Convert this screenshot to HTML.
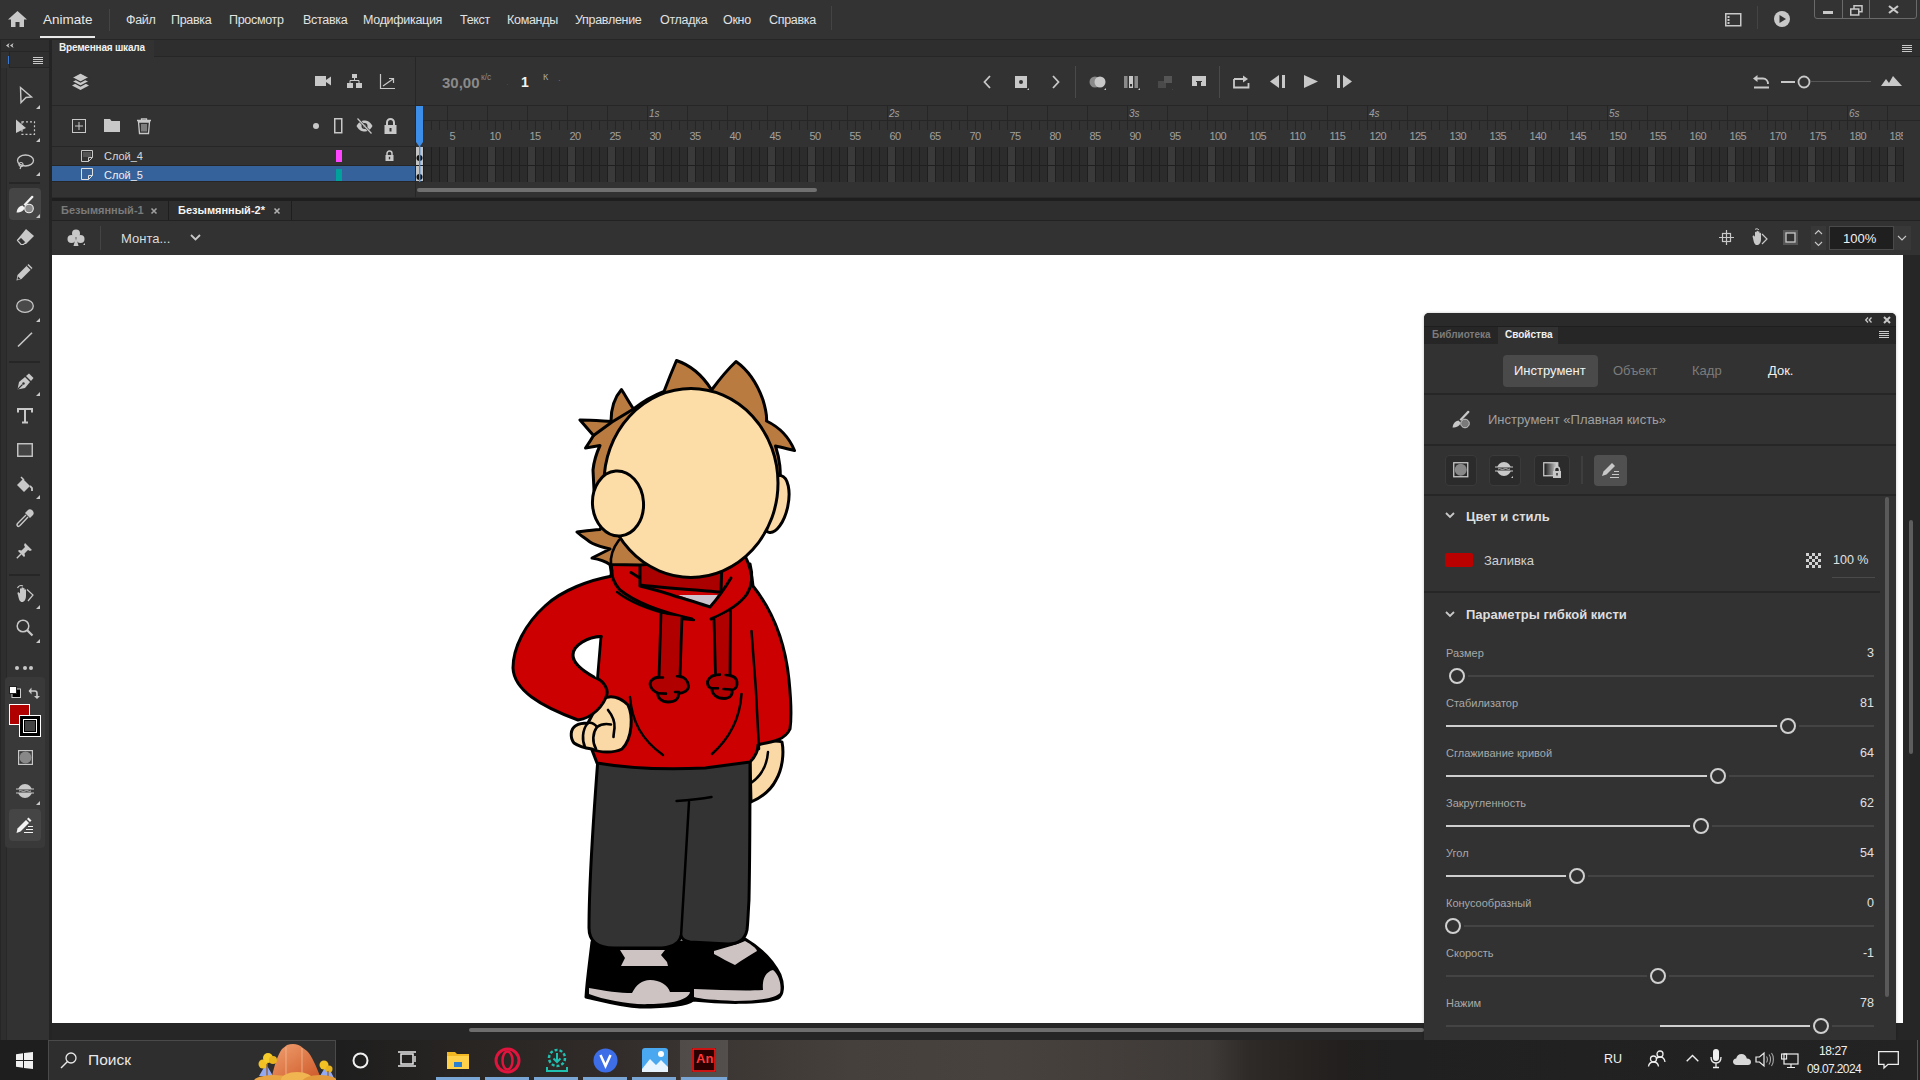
<!DOCTYPE html>
<html><head><meta charset="utf-8">
<style>
*{margin:0;padding:0;box-sizing:border-box}
html,body{width:1920px;height:1080px;overflow:hidden;background:#323232;font-family:"Liberation Sans",sans-serif;color:#d6d6d6}
.a{position:absolute}
.t{position:absolute;white-space:nowrap;line-height:1}
svg{position:absolute;overflow:visible}
</style></head><body>
<div class="a" style="left:0px;top:0px;width:1920px;height:39px;background:#333333;"></div>
<div class="a" style="left:0px;top:39px;width:1920px;height:1px;background:#262626;"></div>
<svg style="left:8px;top:11px;" width="19" height="17" viewBox="0 0 19 17"><path d="M9.5 0 L19 8.5 L16 8.5 L16 16 L11.5 16 L11.5 11 L7.5 11 L7.5 16 L3 16 L3 8.5 L0 8.5 Z" fill="#c8c8c8"/></svg>
<div class="t" style="left:43px;top:13px;font-size:13.5px;color:#e8e8e8;font-weight:normal;">Animate</div>
<div class="a" style="left:40px;top:36px;width:55px;height:2px;background:#e8e8e8;"></div>
<div class="a" style="left:109px;top:9px;width:1px;height:22px;background:#444;"></div>
<div class="t" style="left:126px;top:14px;font-size:12.5px;color:#e2e2e2;font-weight:normal;letter-spacing:-0.3px">Файл</div>
<div class="t" style="left:171px;top:14px;font-size:12.5px;color:#e2e2e2;font-weight:normal;letter-spacing:-0.3px">Правка</div>
<div class="t" style="left:229px;top:14px;font-size:12.5px;color:#e2e2e2;font-weight:normal;letter-spacing:-0.3px">Просмотр</div>
<div class="t" style="left:303px;top:14px;font-size:12.5px;color:#e2e2e2;font-weight:normal;letter-spacing:-0.3px">Вставка</div>
<div class="t" style="left:363px;top:14px;font-size:12.5px;color:#e2e2e2;font-weight:normal;letter-spacing:-0.3px">Модификация</div>
<div class="t" style="left:460px;top:14px;font-size:12.5px;color:#e2e2e2;font-weight:normal;letter-spacing:-0.3px">Текст</div>
<div class="t" style="left:507px;top:14px;font-size:12.5px;color:#e2e2e2;font-weight:normal;letter-spacing:-0.3px">Команды</div>
<div class="t" style="left:575px;top:14px;font-size:12.5px;color:#e2e2e2;font-weight:normal;letter-spacing:-0.3px">Управление</div>
<div class="t" style="left:660px;top:14px;font-size:12.5px;color:#e2e2e2;font-weight:normal;letter-spacing:-0.3px">Отладка</div>
<div class="t" style="left:723px;top:14px;font-size:12.5px;color:#e2e2e2;font-weight:normal;letter-spacing:-0.3px">Окно</div>
<div class="t" style="left:769px;top:14px;font-size:12.5px;color:#e2e2e2;font-weight:normal;letter-spacing:-0.3px">Справка</div>
<div class="a" style="left:831px;top:6px;width:1px;height:24px;background:#444;"></div>
<svg style="left:1725px;top:13px;" width="17" height="14" viewBox="0 0 17 14"><rect x="0.75" y="0.75" width="15" height="12" fill="none" stroke="#c8c8c8" stroke-width="1.5"/><rect x="2.5" y="3" width="2" height="2" fill="#c8c8c8"/><rect x="2.5" y="6" width="2" height="2" fill="#c8c8c8"/><rect x="2.5" y="9" width="2" height="2" fill="#c8c8c8"/></svg>
<div class="a" style="left:1757px;top:6px;width:1px;height:23px;background:#444;"></div>
<svg style="left:1774px;top:11px;" width="17" height="17" viewBox="0 0 17 17"><circle cx="8" cy="8" r="8" fill="#c8c8c8"/><path d="M5.5 4 L12 8 L5.5 12 Z" fill="#323232"/></svg>
<div class="a" style="left:1814px;top:-2px;width:103px;height:21px;border:1px solid #6a6a6a;border-radius:0 0 3px 3px"></div>
<div class="a" style="left:1842px;top:0px;width:1px;height:18px;background:#6a6a6a;"></div>
<div class="a" style="left:1869px;top:0px;width:1px;height:18px;background:#6a6a6a;"></div>
<div class="a" style="left:1823px;top:11px;width:10px;height:3px;background:#c8c8c8;"></div>
<svg style="left:1850px;top:5px;" width="13" height="11" viewBox="0 0 13 11"><rect x="4" y="0.75" width="8" height="6" fill="none" stroke="#c8c8c8" stroke-width="1.5"/><rect x="0.75" y="4" width="8" height="6" fill="#323232" stroke="#c8c8c8" stroke-width="1.5"/></svg>
<svg style="left:1888px;top:5px;" width="11" height="9" viewBox="0 0 11 9"><path d="M1 1 L10 8 M10 1 L1 8" stroke="#c8c8c8" stroke-width="2.2"/></svg>
<div class="a" style="left:0px;top:40px;width:49px;height:1000px;background:#323232;"></div>
<div class="a" style="left:0px;top:40px;width:1px;height:1000px;background:#262626;"></div>
<div class="a" style="left:49px;top:40px;width:3px;height:1000px;background:#242424;"></div>
<div class="a" style="left:1px;top:68px;width:5px;height:972px;background:#2e2e2e;"></div>
<div class="a" style="left:6px;top:68px;width:1px;height:972px;background:#282828;"></div>
<div class="a" style="left:1px;top:40px;width:48px;height:11px;background:#2e2e2e;"></div>
<svg style="left:6px;top:43px;" width="8" height="5" viewBox="0 0 8 5"><path d="M3.5 0L0 2.5L3.5 5L2.5 2.5Z M7.5 0L4 2.5L7.5 5L6.5 2.5Z" fill="#c8c8c8"/></svg>
<div class="a" style="left:1px;top:51px;width:48px;height:1px;background:#262626;"></div>
<div class="a" style="left:9px;top:52px;width:40px;height:16px;border-left:1px solid #262626;border-bottom:1px solid #262626;background:#2f2f2f"></div>
<div class="a" style="left:8px;top:56px;width:1px;height:8px;background:#3a7bd5;"></div>
<svg style="left:33px;top:57px;" width="10" height="7" viewBox="0 0 10 7"><path d="M0 0.5H10M0 2.5H10M0 4.5H10M0 6.5H10" stroke="#c8c8c8" stroke-width="1"/></svg>
<div class="a" style="left:9px;top:182px;width:31px;height:2px;background:#262626;"></div>
<div class="a" style="left:9px;top:361px;width:31px;height:2px;background:#262626;"></div>
<div class="a" style="left:9px;top:574px;width:31px;height:2px;background:#262626;"></div>
<svg style="left:19px;top:86px;" width="14" height="18" viewBox="0 0 14 18"><path d="M1.5 1.5L12.5 11L7 11.5L2 16.5Z" fill="none" stroke="#c8c8c8" stroke-width="1.4" stroke-linejoin="miter"/></svg>
<svg style="left:36px;top:105px;" width="4" height="4" viewBox="0 0 4 4"><path d="M4 0V4H0Z" fill="#c8c8c8"/></svg>
<svg style="left:15px;top:119px;" width="21" height="16" viewBox="0 0 21 16"><path d="M1 0.5L11 9L1 14Z" fill="#c8c8c8"/><rect x="7" y="2.8" width="12.5" height="12.5" fill="none" stroke="#c8c8c8" stroke-width="1.2" stroke-dasharray="2 2"/></svg>
<svg style="left:36px;top:138px;" width="4" height="4" viewBox="0 0 4 4"><path d="M4 0V4H0Z" fill="#c8c8c8"/></svg>
<svg style="left:16px;top:154px;" width="19" height="16" viewBox="0 0 19 16"><ellipse cx="9.5" cy="6.5" rx="8" ry="5.5" fill="none" stroke="#c8c8c8" stroke-width="1.3"/><circle cx="5" cy="10.5" r="2" fill="none" stroke="#c8c8c8" stroke-width="1.2"/><path d="M5 12.5L4 15" stroke="#c8c8c8" stroke-width="1.2"/></svg>
<svg style="left:36px;top:172px;" width="4" height="4" viewBox="0 0 4 4"><path d="M4 0V4H0Z" fill="#c8c8c8"/></svg>
<div class="a" style="left:9px;top:188px;width:32px;height:32px;background:#454545;border-radius:4px"></div>
<svg style="left:16px;top:195px;" width="19" height="18" viewBox="0 0 19 18"><path d="M0.5 17.5C1 13.5 3 11 6.5 10.5L8.5 12.5C8 16 5 17.5 0.5 17.5Z" fill="#f2f2f2"/><path d="M7.5 9.5L15.5 1C16.5 0 18.2 1.5 17.2 2.6L9.2 11Z" fill="#f2f2f2"/><circle cx="13" cy="13.5" r="4.3" fill="#888" stroke="#f2f2f2" stroke-width="1.1"/></svg>
<svg style="left:36px;top:214px;" width="4" height="4" viewBox="0 0 4 4"><path d="M4 0V4H0Z" fill="#c8c8c8"/></svg>
<svg style="left:16px;top:229px;" width="19" height="17" viewBox="0 0 19 17"><path d="M10 0L18 7L10 15H5L1 11Z" fill="#c8c8c8"/><path d="M1.5 11.5L5 8L10 13L7.5 15.5H5Z" fill="#323232" stroke="#c8c8c8" stroke-width="1.2"/></svg>
<svg style="left:16px;top:263px;" width="18" height="18" viewBox="0 0 18 18"><path d="M0.5 17.5L1.5 12L12.5 1L16.5 5L5.5 16Z" fill="#c8c8c8"/><path d="M11 2.5L15 6.5" stroke="#323232" stroke-width="1.2"/><path d="M1.5 16.5L2 13.5L4.5 16Z" fill="#323232"/></svg>
<svg style="left:16px;top:299px;" width="18" height="14" viewBox="0 0 18 14"><ellipse cx="9" cy="7" rx="8.3" ry="6.3" fill="#4a4a4a" stroke="#c8c8c8" stroke-width="1.3"/></svg>
<svg style="left:36px;top:318px;" width="4" height="4" viewBox="0 0 4 4"><path d="M4 0V4H0Z" fill="#c8c8c8"/></svg>
<svg style="left:17px;top:332px;" width="16" height="15" viewBox="0 0 16 15"><path d="M1 14.5L15 0.8" stroke="#c8c8c8" stroke-width="1.6"/></svg>
<svg style="left:17px;top:373px;" width="17" height="17" viewBox="0 0 17 17"><path d="M0.5 16.5L2 9L8 4L13 9L8 15Z" fill="#c8c8c8"/><path d="M9 3L12 0.5L16.5 5L14 8Z" fill="#c8c8c8"/><path d="M0.5 16.5L5.5 11.5" stroke="#323232" stroke-width="1.1"/><circle cx="6.5" cy="10.5" r="1.2" fill="#323232"/></svg>
<svg style="left:36px;top:392px;" width="4" height="4" viewBox="0 0 4 4"><path d="M4 0V4H0Z" fill="#c8c8c8"/></svg>
<svg style="left:17px;top:408px;" width="16" height="16" viewBox="0 0 16 16"><path d="M1 4.5V1H15V4.5M8 1V14.5M5 14.5H11" stroke="#c8c8c8" stroke-width="2" fill="none"/></svg>
<svg style="left:17px;top:443px;" width="16" height="14" viewBox="0 0 16 14"><rect x="0.75" y="0.75" width="14.5" height="12.5" fill="#444" stroke="#c8c8c8" stroke-width="1.4"/></svg>
<svg style="left:16px;top:476px;" width="18" height="17" viewBox="0 0 18 17"><path d="M1 9L7 3L14 10L8 16Z" fill="#c8c8c8"/><path d="M5 1L8 4" stroke="#c8c8c8" stroke-width="1.5"/><path d="M14 10L16 12V15" stroke="#c8c8c8" stroke-width="1.8" fill="none"/></svg>
<svg style="left:36px;top:495px;" width="4" height="4" viewBox="0 0 4 4"><path d="M4 0V4H0Z" fill="#c8c8c8"/></svg>
<svg style="left:16px;top:509px;" width="18" height="18" viewBox="0 0 18 18"><path d="M12 1C13 0 15 0 16.5 1.5C18 3 18 5 17 6L14 9L9 4Z" fill="#c8c8c8"/><path d="M10 6L2 14C1 15 1 16.5 1.5 17C2 17.5 3 17.5 4 16.5L12 8" fill="none" stroke="#c8c8c8" stroke-width="1.4"/></svg>
<svg style="left:16px;top:543px;" width="16" height="16" viewBox="0 0 16 16"><path d="M9 0L16 7L14 8L12 7L8.5 10.5L9 13L8 14L2 8L3 7L5.5 7.5L9 4L8 2Z" fill="#c8c8c8"/><path d="M5 11L0.8 15.2" stroke="#c8c8c8" stroke-width="1.4"/></svg>
<svg style="left:15px;top:585px;" width="19" height="18" viewBox="0 0 19 18"><path d="M3 10C2 8 2.5 7 4 7.5L5 8.5V4C5 3 6.5 3 6.5 4V7.5V3C6.5 2 8 2 8 3V7.5V3.5C8 2.5 9.5 2.5 9.5 3.5V8V5C9.5 4 11 4 11 5V10.5C11 14.5 9.5 17 7 17C5 17 4 15 3 10Z" fill="#c8c8c8"/><path d="M12 4.5L18 10L13 16" stroke="#c8c8c8" stroke-width="1.2" fill="none"/><path d="M2.5 3C3.5 1 6 0 8 1" stroke="#c8c8c8" stroke-width="1.2" fill="none"/></svg>
<svg style="left:36px;top:605px;" width="4" height="4" viewBox="0 0 4 4"><path d="M4 0V4H0Z" fill="#c8c8c8"/></svg>
<svg style="left:16px;top:619px;" width="18" height="18" viewBox="0 0 18 18"><circle cx="7" cy="7" r="5.8" fill="none" stroke="#c8c8c8" stroke-width="1.5"/><path d="M11 11L16.5 16.5" stroke="#c8c8c8" stroke-width="2.2"/></svg>
<svg style="left:36px;top:639px;" width="4" height="4" viewBox="0 0 4 4"><path d="M4 0V4H0Z" fill="#c8c8c8"/></svg>
<svg style="left:15px;top:666px;" width="4" height="4" viewBox="0 0 4 4"><circle cx="2" cy="2" r="2" fill="#c8c8c8"/></svg>
<svg style="left:23px;top:666px;" width="4" height="4" viewBox="0 0 4 4"><circle cx="2" cy="2" r="2" fill="#c8c8c8"/></svg>
<svg style="left:29px;top:666px;" width="4" height="4" viewBox="0 0 4 4"><circle cx="2" cy="2" r="2" fill="#c8c8c8"/></svg>
<div class="a" style="left:5px;top:677px;width:40px;height:171px;background:#393939;border-radius:4px"></div>
<svg style="left:9px;top:686px;" width="12" height="12" viewBox="0 0 12 12"><rect x="3" y="3" width="8.5" height="8.5" fill="#000" stroke="#ccc" stroke-width="1"/><rect x="0.5" y="0.5" width="7" height="7" fill="#fff" stroke="#222" stroke-width="1"/></svg>
<svg style="left:28px;top:687px;" width="12" height="12" viewBox="0 0 12 12"><path d="M1 4H7C8.5 4 9 5 9 6.5V10" stroke="#c8c8c8" stroke-width="1.6" fill="none"/><path d="M3.5 0.5L0.5 4L3.5 7.5Z M6 9L9 12L12 9Z" fill="#c8c8c8"/></svg>
<div class="a" style="left:9px;top:704px;width:21px;height:21px;background:#ffffff;"></div>
<div class="a" style="left:10px;top:705px;width:19px;height:19px;background:#b00000;"></div>
<div class="a" style="left:19px;top:715px;width:22px;height:22px;background:#ffffff;"></div>
<div class="a" style="left:20px;top:716px;width:20px;height:20px;background:#000000;"></div>
<div class="a" style="left:23px;top:719px;width:14px;height:14px;background:#ffffff;"></div>
<div class="a" style="left:24px;top:720px;width:12px;height:12px;background:#000000;"></div>
<div class="a" style="left:25px;top:721px;width:10px;height:10px;background:#444444;"></div>
<svg style="left:18px;top:750px;" width="15" height="15" viewBox="0 0 15 15"><rect x="0.6" y="0.6" width="13.8" height="13.8" fill="none" stroke="#c8c8c8" stroke-width="1.2"/><circle cx="7.5" cy="7.5" r="6" fill="#888"/></svg>
<svg style="left:17px;top:783px;" width="17" height="16" viewBox="0 0 17 16"><circle cx="8" cy="8" r="7" fill="#c8c8c8"/><rect x="-1" y="6" width="18" height="4" fill="#393939"/><path d="M-1 6H17M-1 10H17" stroke="#c8c8c8" stroke-width="1.2"/><path d="M2 8C4 6.8 5.5 9.2 8 8C10.5 6.8 12 9.2 14 8" stroke="#c8c8c8" stroke-width="1" fill="none"/></svg>
<svg style="left:36px;top:801px;" width="4" height="4" viewBox="0 0 4 4"><path d="M4 0V4H0Z" fill="#c8c8c8"/></svg>
<div class="a" style="left:9px;top:809px;width:32px;height:32px;background:#454545;border-radius:4px"></div>
<svg style="left:16px;top:817px;" width="18" height="17" viewBox="0 0 18 17"><path d="M0.5 16L1.5 11.5L10 3L13 6L4.5 14.5Z" fill="#f2f2f2"/><path d="M11 2L12.5 0.5L15.5 3.5L14 5Z" fill="#f2f2f2"/><path d="M8 15.5H17M10 12.5H17M12 9.5H17" stroke="#f2f2f2" stroke-width="1.1"/></svg>
<div class="a" style="left:52px;top:40px;width:1868px;height:16px;background:#2e2e2e;"></div>
<div class="a" style="left:52px;top:56px;width:1868px;height:1px;background:#262626;"></div>
<div class="a" style="left:52px;top:40px;width:102px;height:17px;background:#323232;"></div>
<div class="t" style="left:59px;top:43px;font-size:10px;color:#f0f0f0;font-weight:bold;letter-spacing:-0.2px">Временная шкала</div>
<svg style="left:1902px;top:45px;" width="10" height="7" viewBox="0 0 10 7"><path d="M0 0.5H10M0 2.5H10M0 4.5H10M0 6.5H10" stroke="#c8c8c8" stroke-width="1"/></svg>
<div class="a" style="left:52px;top:57px;width:1868px;height:141px;background:#323232;"></div>
<div class="a" style="left:52px;top:105px;width:1868px;height:1px;background:#262626;"></div>
<div class="a" style="left:52px;top:146px;width:363px;height:1px;background:#262626;"></div>
<div class="a" style="left:415px;top:56px;width:1px;height:142px;background:#262626;"></div>
<svg style="left:72px;top:73px;" width="17" height="18" viewBox="0 0 17 18"><path d="M8.5 8L17 12.5L8.5 17L0 12.5Z" fill="#c8c8c8"/><path d="M8.5 4L17 8.5L8.5 13L0 8.5Z" fill="#c8c8c8" stroke="#323232" stroke-width="1.2"/><path d="M8.5 0L17 4.5L8.5 9L0 4.5Z" fill="#c8c8c8" stroke="#323232" stroke-width="1.2"/></svg>
<svg style="left:315px;top:75px;" width="16" height="12" viewBox="0 0 16 12"><rect x="0" y="1" width="11" height="10" fill="#c8c8c8"/><path d="M11 5 L16 1.5 L16 10.5 L11 7Z" fill="#c8c8c8"/></svg>
<svg style="left:347px;top:74px;" width="15" height="14" viewBox="0 0 15 14"><rect x="5" y="0" width="5" height="4" fill="#c8c8c8"/><rect x="0" y="9" width="6" height="5" fill="#c8c8c8"/><rect x="9" y="9" width="6" height="5" fill="#c8c8c8"/><path d="M7.5 4V6.5M3 9V6.5H12V9" stroke="#c8c8c8" stroke-width="1" fill="none"/></svg>
<svg style="left:380px;top:74px;" width="15" height="15" viewBox="0 0 15 15"><path d="M0.5 0V14.5H15M3 12L13 5M9 4.5H13.5V9" stroke="#c8c8c8" stroke-width="1.2" fill="none"/></svg>
<div class="t" style="left:442px;top:75px;font-size:15px;color:#8a8a8a;font-weight:bold;">30,00</div>
<div class="t" style="left:481px;top:73px;font-size:8.5px;color:#8a8a8a;font-weight:normal;">к/с</div>
<div class="t" style="left:506px;top:81px;font-size:8px;color:#555;font-weight:normal;">·</div>
<div class="t" style="left:521px;top:75px;font-size:14px;color:#f2f2f2;font-weight:bold;">1</div>
<div class="t" style="left:543px;top:73px;font-size:9px;color:#a8a8a8;font-weight:normal;">К</div>
<div class="t" style="left:558px;top:77px;font-size:8px;color:#888;font-weight:normal;">·</div>
<svg style="left:983px;top:75px;" width="8" height="14" viewBox="0 0 8 14"><path d="M7 1 L1.5 7 L7 13" stroke="#c8c8c8" stroke-width="1.8" fill="none"/></svg>
<svg style="left:1015px;top:76px;" width="15" height="14" viewBox="0 0 15 14"><rect x="0" y="0" width="12" height="12" fill="#c8c8c8"/><circle cx="6" cy="6" r="2" fill="#323232"/><path d="M12 14 L14 12 L14 14Z" fill="#c8c8c8"/></svg>
<svg style="left:1052px;top:75px;" width="8" height="14" viewBox="0 0 8 14"><path d="M1 1 L6.5 7 L1 13" stroke="#c8c8c8" stroke-width="1.8" fill="none"/></svg>
<div class="a" style="left:1075px;top:66px;width:1px;height:32px;background:#4a4a4a;"></div>
<svg style="left:1089px;top:76px;" width="18" height="14" viewBox="0 0 18 14"><circle cx="6" cy="6" r="5.5" fill="#8a8a8a"/><circle cx="11" cy="6" r="5.5" fill="#c8c8c8"/><path d="M15 14 L17 12 L17 14Z" fill="#c8c8c8"/></svg>
<svg style="left:1124px;top:76px;" width="17" height="14" viewBox="0 0 17 14"><rect x="0" y="0" width="3.5" height="12" fill="#8a8a8a"/><rect x="5" y="0" width="4" height="12" fill="#c8c8c8"/><rect x="10.5" y="0" width="3.5" height="12" fill="#8a8a8a"/><rect x="6" y="8" width="2" height="2.5" fill="#323232"/><path d="M14 14 L16 12 L16 14Z" fill="#c8c8c8"/></svg>
<svg style="left:1158px;top:76px;" width="16" height="14" viewBox="0 0 16 14"><rect x="0" y="5" width="8" height="7" fill="#4a4a4a"/><rect x="6" y="0" width="8" height="7" fill="#555"/><path d="M14 14 L15 13 L15 14Z" fill="#555"/></svg>
<svg style="left:1192px;top:76px;" width="15" height="12" viewBox="0 0 15 12"><path d="M0 0H14V10H9V6H10V5H4V6H5V10H0Z" fill="#c8c8c8"/></svg>
<div class="a" style="left:1219px;top:66px;width:1px;height:32px;background:#4a4a4a;"></div>
<svg style="left:1233px;top:74px;" width="17" height="15" viewBox="0 0 17 15"><path d="M1 5V13.5H15.5V9M1 5H11" stroke="#c8c8c8" stroke-width="1.8" fill="none"/><path d="M10 1.5L15 5L10 8.5Z" fill="#c8c8c8"/></svg>
<svg style="left:1270px;top:75px;" width="16" height="13" viewBox="0 0 16 13"><path d="M9 0V13L0 6.5Z" fill="#c8c8c8"/><rect x="12" y="0" width="3" height="13" fill="#c8c8c8"/></svg>
<svg style="left:1304px;top:75px;" width="14" height="13" viewBox="0 0 14 13"><path d="M0 0L14 6.5L0 13Z" fill="#c8c8c8"/></svg>
<svg style="left:1337px;top:75px;" width="16" height="13" viewBox="0 0 16 13"><rect x="0" y="0" width="3" height="13" fill="#c8c8c8"/><path d="M6 0L15 6.5L6 13Z" fill="#c8c8c8"/></svg>
<svg style="left:1752px;top:74px;" width="18" height="14" viewBox="0 0 18 14"><path d="M2 13.5H17M4 4.5H11C14 4.5 16 7 16 10M4 4.5" stroke="#c8c8c8" stroke-width="1.8" fill="none"/><path d="M1 4.5L5.5 1V8Z" fill="#c8c8c8"/></svg>
<div class="a" style="left:1781px;top:81px;width:14px;height:2px;background:#c8c8c8;"></div>
<svg style="left:1797px;top:75px;" width="14" height="14" viewBox="0 0 14 14"><circle cx="7" cy="7" r="5.5" fill="none" stroke="#c8c8c8" stroke-width="1.8"/></svg>
<div class="a" style="left:1811px;top:81px;width:60px;height:1px;background:#555;"></div>
<svg style="left:1881px;top:75px;" width="21" height="11" viewBox="0 0 21 11"><path d="M0 11L5 4L8 8L12 1L21 11Z" fill="#c8c8c8"/></svg>
<svg style="left:72px;top:119px;" width="14" height="14" viewBox="0 0 14 14"><rect x="0.5" y="0.5" width="13" height="13" fill="none" stroke="#c8c8c8" stroke-width="1"/><path d="M7 3V11M3 7H11" stroke="#c8c8c8" stroke-width="1"/></svg>
<svg style="left:104px;top:119px;" width="17" height="14" viewBox="0 0 17 14"><path d="M0 0H6L7.5 2H16V13H0Z" fill="#c8c8c8"/></svg>
<svg style="left:136px;top:118px;" width="16" height="16" viewBox="0 0 16 16"><path d="M1 2.5H15M5.5 2.5V0.8H10.5V2.5M2.5 4H13.5L12.5 15.5H3.5Z" stroke="#c8c8c8" stroke-width="1.3" fill="none"/><path d="M6 6V13.5M8 6V13.5M10 6V13.5" stroke="#c8c8c8" stroke-width="1"/></svg>
<svg style="left:313px;top:123px;" width="6" height="6" viewBox="0 0 6 6"><circle cx="3" cy="3" r="3" fill="#c8c8c8"/></svg>
<svg style="left:334px;top:118px;" width="9" height="16" viewBox="0 0 9 16"><rect x="0.75" y="0.75" width="7" height="14" fill="none" stroke="#c8c8c8" stroke-width="1.5"/></svg>
<svg style="left:356px;top:118px;" width="17" height="16" viewBox="0 0 17 16"><path d="M0.5 8C3 3.5 6 2.5 8.5 2.5C11 2.5 14 3.5 16.5 8C14 12.5 11 13.5 8.5 13.5C6 13.5 3 12.5 0.5 8Z" fill="#c8c8c8"/><circle cx="8.5" cy="8" r="3" fill="#323232"/><circle cx="8.5" cy="8" r="1.5" fill="#c8c8c8"/><path d="M1.5 0.5L15.5 15.5" stroke="#323232" stroke-width="2.5"/><path d="M1.5 0.5L15.5 15.5" stroke="#c8c8c8" stroke-width="1.2"/></svg>
<svg style="left:384px;top:118px;" width="13" height="16" viewBox="0 0 13 16"><path d="M3 7V4.5A3.5 3.5 0 0 1 10 4.5V7" stroke="#c8c8c8" stroke-width="2" fill="none"/><rect x="0.5" y="7" width="12" height="9" fill="#c8c8c8"/><rect x="5.5" y="10" width="2" height="3.5" fill="#323232"/></svg>
<div class="a" style="left:416px;top:106px;width:1487px;height:40px;background:#323232;"></div>
<div class="a" style="left:416px;top:120px;width:1504px;height:1px;background:#262626;"></div>
<svg style="left:416px;top:106px;" width="1487" height="40" viewBox="0 0 1487 40"><rect x="7" y="15" width="1" height="9" fill="#262626"/><rect x="15" y="15" width="1" height="9" fill="#262626"/><rect x="23" y="15" width="1" height="9" fill="#262626"/><rect x="31" y="15" width="1" height="9" fill="#262626"/><rect x="31" y="0" width="1" height="15" fill="#262626"/><rect x="39" y="15" width="1" height="9" fill="#262626"/><rect x="47" y="15" width="1" height="9" fill="#262626"/><rect x="55" y="15" width="1" height="9" fill="#262626"/><rect x="63" y="15" width="1" height="9" fill="#262626"/><rect x="71" y="15" width="1" height="9" fill="#262626"/><rect x="71" y="0" width="1" height="15" fill="#262626"/><rect x="79" y="15" width="1" height="9" fill="#262626"/><rect x="87" y="15" width="1" height="9" fill="#262626"/><rect x="95" y="15" width="1" height="9" fill="#262626"/><rect x="103" y="15" width="1" height="9" fill="#262626"/><rect x="111" y="15" width="1" height="9" fill="#262626"/><rect x="111" y="0" width="1" height="15" fill="#262626"/><rect x="119" y="15" width="1" height="9" fill="#262626"/><rect x="127" y="15" width="1" height="9" fill="#262626"/><rect x="135" y="15" width="1" height="9" fill="#262626"/><rect x="143" y="15" width="1" height="9" fill="#262626"/><rect x="151" y="15" width="1" height="9" fill="#262626"/><rect x="151" y="0" width="1" height="15" fill="#262626"/><rect x="159" y="15" width="1" height="9" fill="#262626"/><rect x="167" y="15" width="1" height="9" fill="#262626"/><rect x="175" y="15" width="1" height="9" fill="#262626"/><rect x="183" y="15" width="1" height="9" fill="#262626"/><rect x="191" y="15" width="1" height="9" fill="#262626"/><rect x="191" y="0" width="1" height="15" fill="#262626"/><rect x="199" y="15" width="1" height="9" fill="#262626"/><rect x="207" y="15" width="1" height="9" fill="#262626"/><rect x="215" y="15" width="1" height="9" fill="#262626"/><rect x="223" y="15" width="1" height="9" fill="#262626"/><rect x="231" y="15" width="1" height="9" fill="#262626"/><rect x="231" y="0" width="1" height="15" fill="#262626"/><rect x="239" y="15" width="1" height="9" fill="#262626"/><rect x="247" y="15" width="1" height="9" fill="#262626"/><rect x="255" y="15" width="1" height="9" fill="#262626"/><rect x="263" y="15" width="1" height="9" fill="#262626"/><rect x="271" y="15" width="1" height="9" fill="#262626"/><rect x="271" y="0" width="1" height="15" fill="#262626"/><rect x="279" y="15" width="1" height="9" fill="#262626"/><rect x="287" y="15" width="1" height="9" fill="#262626"/><rect x="295" y="15" width="1" height="9" fill="#262626"/><rect x="303" y="15" width="1" height="9" fill="#262626"/><rect x="311" y="15" width="1" height="9" fill="#262626"/><rect x="311" y="0" width="1" height="15" fill="#262626"/><rect x="319" y="15" width="1" height="9" fill="#262626"/><rect x="327" y="15" width="1" height="9" fill="#262626"/><rect x="335" y="15" width="1" height="9" fill="#262626"/><rect x="343" y="15" width="1" height="9" fill="#262626"/><rect x="351" y="15" width="1" height="9" fill="#262626"/><rect x="351" y="0" width="1" height="15" fill="#262626"/><rect x="359" y="15" width="1" height="9" fill="#262626"/><rect x="367" y="15" width="1" height="9" fill="#262626"/><rect x="375" y="15" width="1" height="9" fill="#262626"/><rect x="383" y="15" width="1" height="9" fill="#262626"/><rect x="391" y="15" width="1" height="9" fill="#262626"/><rect x="391" y="0" width="1" height="15" fill="#262626"/><rect x="399" y="15" width="1" height="9" fill="#262626"/><rect x="407" y="15" width="1" height="9" fill="#262626"/><rect x="415" y="15" width="1" height="9" fill="#262626"/><rect x="423" y="15" width="1" height="9" fill="#262626"/><rect x="431" y="15" width="1" height="9" fill="#262626"/><rect x="431" y="0" width="1" height="15" fill="#262626"/><rect x="439" y="15" width="1" height="9" fill="#262626"/><rect x="447" y="15" width="1" height="9" fill="#262626"/><rect x="455" y="15" width="1" height="9" fill="#262626"/><rect x="463" y="15" width="1" height="9" fill="#262626"/><rect x="471" y="15" width="1" height="9" fill="#262626"/><rect x="471" y="0" width="1" height="15" fill="#262626"/><rect x="479" y="15" width="1" height="9" fill="#262626"/><rect x="487" y="15" width="1" height="9" fill="#262626"/><rect x="495" y="15" width="1" height="9" fill="#262626"/><rect x="503" y="15" width="1" height="9" fill="#262626"/><rect x="511" y="15" width="1" height="9" fill="#262626"/><rect x="511" y="0" width="1" height="15" fill="#262626"/><rect x="519" y="15" width="1" height="9" fill="#262626"/><rect x="527" y="15" width="1" height="9" fill="#262626"/><rect x="535" y="15" width="1" height="9" fill="#262626"/><rect x="543" y="15" width="1" height="9" fill="#262626"/><rect x="551" y="15" width="1" height="9" fill="#262626"/><rect x="551" y="0" width="1" height="15" fill="#262626"/><rect x="559" y="15" width="1" height="9" fill="#262626"/><rect x="567" y="15" width="1" height="9" fill="#262626"/><rect x="575" y="15" width="1" height="9" fill="#262626"/><rect x="583" y="15" width="1" height="9" fill="#262626"/><rect x="591" y="15" width="1" height="9" fill="#262626"/><rect x="591" y="0" width="1" height="15" fill="#262626"/><rect x="599" y="15" width="1" height="9" fill="#262626"/><rect x="607" y="15" width="1" height="9" fill="#262626"/><rect x="615" y="15" width="1" height="9" fill="#262626"/><rect x="623" y="15" width="1" height="9" fill="#262626"/><rect x="631" y="15" width="1" height="9" fill="#262626"/><rect x="631" y="0" width="1" height="15" fill="#262626"/><rect x="639" y="15" width="1" height="9" fill="#262626"/><rect x="647" y="15" width="1" height="9" fill="#262626"/><rect x="655" y="15" width="1" height="9" fill="#262626"/><rect x="663" y="15" width="1" height="9" fill="#262626"/><rect x="671" y="15" width="1" height="9" fill="#262626"/><rect x="671" y="0" width="1" height="15" fill="#262626"/><rect x="679" y="15" width="1" height="9" fill="#262626"/><rect x="687" y="15" width="1" height="9" fill="#262626"/><rect x="695" y="15" width="1" height="9" fill="#262626"/><rect x="703" y="15" width="1" height="9" fill="#262626"/><rect x="711" y="15" width="1" height="9" fill="#262626"/><rect x="711" y="0" width="1" height="15" fill="#262626"/><rect x="719" y="15" width="1" height="9" fill="#262626"/><rect x="727" y="15" width="1" height="9" fill="#262626"/><rect x="735" y="15" width="1" height="9" fill="#262626"/><rect x="743" y="15" width="1" height="9" fill="#262626"/><rect x="751" y="15" width="1" height="9" fill="#262626"/><rect x="751" y="0" width="1" height="15" fill="#262626"/><rect x="759" y="15" width="1" height="9" fill="#262626"/><rect x="767" y="15" width="1" height="9" fill="#262626"/><rect x="775" y="15" width="1" height="9" fill="#262626"/><rect x="783" y="15" width="1" height="9" fill="#262626"/><rect x="791" y="15" width="1" height="9" fill="#262626"/><rect x="791" y="0" width="1" height="15" fill="#262626"/><rect x="799" y="15" width="1" height="9" fill="#262626"/><rect x="807" y="15" width="1" height="9" fill="#262626"/><rect x="815" y="15" width="1" height="9" fill="#262626"/><rect x="823" y="15" width="1" height="9" fill="#262626"/><rect x="831" y="15" width="1" height="9" fill="#262626"/><rect x="831" y="0" width="1" height="15" fill="#262626"/><rect x="839" y="15" width="1" height="9" fill="#262626"/><rect x="847" y="15" width="1" height="9" fill="#262626"/><rect x="855" y="15" width="1" height="9" fill="#262626"/><rect x="863" y="15" width="1" height="9" fill="#262626"/><rect x="871" y="15" width="1" height="9" fill="#262626"/><rect x="871" y="0" width="1" height="15" fill="#262626"/><rect x="879" y="15" width="1" height="9" fill="#262626"/><rect x="887" y="15" width="1" height="9" fill="#262626"/><rect x="895" y="15" width="1" height="9" fill="#262626"/><rect x="903" y="15" width="1" height="9" fill="#262626"/><rect x="911" y="15" width="1" height="9" fill="#262626"/><rect x="911" y="0" width="1" height="15" fill="#262626"/><rect x="919" y="15" width="1" height="9" fill="#262626"/><rect x="927" y="15" width="1" height="9" fill="#262626"/><rect x="935" y="15" width="1" height="9" fill="#262626"/><rect x="943" y="15" width="1" height="9" fill="#262626"/><rect x="951" y="15" width="1" height="9" fill="#262626"/><rect x="951" y="0" width="1" height="15" fill="#262626"/><rect x="959" y="15" width="1" height="9" fill="#262626"/><rect x="967" y="15" width="1" height="9" fill="#262626"/><rect x="975" y="15" width="1" height="9" fill="#262626"/><rect x="983" y="15" width="1" height="9" fill="#262626"/><rect x="991" y="15" width="1" height="9" fill="#262626"/><rect x="991" y="0" width="1" height="15" fill="#262626"/><rect x="999" y="15" width="1" height="9" fill="#262626"/><rect x="1007" y="15" width="1" height="9" fill="#262626"/><rect x="1015" y="15" width="1" height="9" fill="#262626"/><rect x="1023" y="15" width="1" height="9" fill="#262626"/><rect x="1031" y="15" width="1" height="9" fill="#262626"/><rect x="1031" y="0" width="1" height="15" fill="#262626"/><rect x="1039" y="15" width="1" height="9" fill="#262626"/><rect x="1047" y="15" width="1" height="9" fill="#262626"/><rect x="1055" y="15" width="1" height="9" fill="#262626"/><rect x="1063" y="15" width="1" height="9" fill="#262626"/><rect x="1071" y="15" width="1" height="9" fill="#262626"/><rect x="1071" y="0" width="1" height="15" fill="#262626"/><rect x="1079" y="15" width="1" height="9" fill="#262626"/><rect x="1087" y="15" width="1" height="9" fill="#262626"/><rect x="1095" y="15" width="1" height="9" fill="#262626"/><rect x="1103" y="15" width="1" height="9" fill="#262626"/><rect x="1111" y="15" width="1" height="9" fill="#262626"/><rect x="1111" y="0" width="1" height="15" fill="#262626"/><rect x="1119" y="15" width="1" height="9" fill="#262626"/><rect x="1127" y="15" width="1" height="9" fill="#262626"/><rect x="1135" y="15" width="1" height="9" fill="#262626"/><rect x="1143" y="15" width="1" height="9" fill="#262626"/><rect x="1151" y="15" width="1" height="9" fill="#262626"/><rect x="1151" y="0" width="1" height="15" fill="#262626"/><rect x="1159" y="15" width="1" height="9" fill="#262626"/><rect x="1167" y="15" width="1" height="9" fill="#262626"/><rect x="1175" y="15" width="1" height="9" fill="#262626"/><rect x="1183" y="15" width="1" height="9" fill="#262626"/><rect x="1191" y="15" width="1" height="9" fill="#262626"/><rect x="1191" y="0" width="1" height="15" fill="#262626"/><rect x="1199" y="15" width="1" height="9" fill="#262626"/><rect x="1207" y="15" width="1" height="9" fill="#262626"/><rect x="1215" y="15" width="1" height="9" fill="#262626"/><rect x="1223" y="15" width="1" height="9" fill="#262626"/><rect x="1231" y="15" width="1" height="9" fill="#262626"/><rect x="1231" y="0" width="1" height="15" fill="#262626"/><rect x="1239" y="15" width="1" height="9" fill="#262626"/><rect x="1247" y="15" width="1" height="9" fill="#262626"/><rect x="1255" y="15" width="1" height="9" fill="#262626"/><rect x="1263" y="15" width="1" height="9" fill="#262626"/><rect x="1271" y="15" width="1" height="9" fill="#262626"/><rect x="1271" y="0" width="1" height="15" fill="#262626"/><rect x="1279" y="15" width="1" height="9" fill="#262626"/><rect x="1287" y="15" width="1" height="9" fill="#262626"/><rect x="1295" y="15" width="1" height="9" fill="#262626"/><rect x="1303" y="15" width="1" height="9" fill="#262626"/><rect x="1311" y="15" width="1" height="9" fill="#262626"/><rect x="1311" y="0" width="1" height="15" fill="#262626"/><rect x="1319" y="15" width="1" height="9" fill="#262626"/><rect x="1327" y="15" width="1" height="9" fill="#262626"/><rect x="1335" y="15" width="1" height="9" fill="#262626"/><rect x="1343" y="15" width="1" height="9" fill="#262626"/><rect x="1351" y="15" width="1" height="9" fill="#262626"/><rect x="1351" y="0" width="1" height="15" fill="#262626"/><rect x="1359" y="15" width="1" height="9" fill="#262626"/><rect x="1367" y="15" width="1" height="9" fill="#262626"/><rect x="1375" y="15" width="1" height="9" fill="#262626"/><rect x="1383" y="15" width="1" height="9" fill="#262626"/><rect x="1391" y="15" width="1" height="9" fill="#262626"/><rect x="1391" y="0" width="1" height="15" fill="#262626"/><rect x="1399" y="15" width="1" height="9" fill="#262626"/><rect x="1407" y="15" width="1" height="9" fill="#262626"/><rect x="1415" y="15" width="1" height="9" fill="#262626"/><rect x="1423" y="15" width="1" height="9" fill="#262626"/><rect x="1431" y="15" width="1" height="9" fill="#262626"/><rect x="1431" y="0" width="1" height="15" fill="#262626"/><rect x="1439" y="15" width="1" height="9" fill="#262626"/><rect x="1447" y="15" width="1" height="9" fill="#262626"/><rect x="1455" y="15" width="1" height="9" fill="#262626"/><rect x="1463" y="15" width="1" height="9" fill="#262626"/><rect x="1471" y="15" width="1" height="9" fill="#262626"/><rect x="1471" y="0" width="1" height="15" fill="#262626"/><rect x="1479" y="15" width="1" height="9" fill="#262626"/></svg>
<div class="a" style="left:416px;top:106px;width:1487px;height:40px;overflow:hidden">
<div class="t" style="left:33.5px;top:25px;font-size:11px;color:#a0a0a0;font-weight:normal;letter-spacing:-0.6px">5</div>
<div class="t" style="left:73.5px;top:25px;font-size:11px;color:#a0a0a0;font-weight:normal;letter-spacing:-0.6px">10</div>
<div class="t" style="left:113.5px;top:25px;font-size:11px;color:#a0a0a0;font-weight:normal;letter-spacing:-0.6px">15</div>
<div class="t" style="left:153.5px;top:25px;font-size:11px;color:#a0a0a0;font-weight:normal;letter-spacing:-0.6px">20</div>
<div class="t" style="left:193.5px;top:25px;font-size:11px;color:#a0a0a0;font-weight:normal;letter-spacing:-0.6px">25</div>
<div class="t" style="left:233.5px;top:25px;font-size:11px;color:#a0a0a0;font-weight:normal;letter-spacing:-0.6px">30</div>
<div class="t" style="left:273.5px;top:25px;font-size:11px;color:#a0a0a0;font-weight:normal;letter-spacing:-0.6px">35</div>
<div class="t" style="left:313.5px;top:25px;font-size:11px;color:#a0a0a0;font-weight:normal;letter-spacing:-0.6px">40</div>
<div class="t" style="left:353.5px;top:25px;font-size:11px;color:#a0a0a0;font-weight:normal;letter-spacing:-0.6px">45</div>
<div class="t" style="left:393.5px;top:25px;font-size:11px;color:#a0a0a0;font-weight:normal;letter-spacing:-0.6px">50</div>
<div class="t" style="left:433.5px;top:25px;font-size:11px;color:#a0a0a0;font-weight:normal;letter-spacing:-0.6px">55</div>
<div class="t" style="left:473.5px;top:25px;font-size:11px;color:#a0a0a0;font-weight:normal;letter-spacing:-0.6px">60</div>
<div class="t" style="left:513.5px;top:25px;font-size:11px;color:#a0a0a0;font-weight:normal;letter-spacing:-0.6px">65</div>
<div class="t" style="left:553.5px;top:25px;font-size:11px;color:#a0a0a0;font-weight:normal;letter-spacing:-0.6px">70</div>
<div class="t" style="left:593.5px;top:25px;font-size:11px;color:#a0a0a0;font-weight:normal;letter-spacing:-0.6px">75</div>
<div class="t" style="left:633.5px;top:25px;font-size:11px;color:#a0a0a0;font-weight:normal;letter-spacing:-0.6px">80</div>
<div class="t" style="left:673.5px;top:25px;font-size:11px;color:#a0a0a0;font-weight:normal;letter-spacing:-0.6px">85</div>
<div class="t" style="left:713.5px;top:25px;font-size:11px;color:#a0a0a0;font-weight:normal;letter-spacing:-0.6px">90</div>
<div class="t" style="left:753.5px;top:25px;font-size:11px;color:#a0a0a0;font-weight:normal;letter-spacing:-0.6px">95</div>
<div class="t" style="left:793.5px;top:25px;font-size:11px;color:#a0a0a0;font-weight:normal;letter-spacing:-0.6px">100</div>
<div class="t" style="left:833.5px;top:25px;font-size:11px;color:#a0a0a0;font-weight:normal;letter-spacing:-0.6px">105</div>
<div class="t" style="left:873.5px;top:25px;font-size:11px;color:#a0a0a0;font-weight:normal;letter-spacing:-0.6px">110</div>
<div class="t" style="left:913.5px;top:25px;font-size:11px;color:#a0a0a0;font-weight:normal;letter-spacing:-0.6px">115</div>
<div class="t" style="left:953.5px;top:25px;font-size:11px;color:#a0a0a0;font-weight:normal;letter-spacing:-0.6px">120</div>
<div class="t" style="left:993.5px;top:25px;font-size:11px;color:#a0a0a0;font-weight:normal;letter-spacing:-0.6px">125</div>
<div class="t" style="left:1033.5px;top:25px;font-size:11px;color:#a0a0a0;font-weight:normal;letter-spacing:-0.6px">130</div>
<div class="t" style="left:1073.5px;top:25px;font-size:11px;color:#a0a0a0;font-weight:normal;letter-spacing:-0.6px">135</div>
<div class="t" style="left:1113.5px;top:25px;font-size:11px;color:#a0a0a0;font-weight:normal;letter-spacing:-0.6px">140</div>
<div class="t" style="left:1153.5px;top:25px;font-size:11px;color:#a0a0a0;font-weight:normal;letter-spacing:-0.6px">145</div>
<div class="t" style="left:1193.5px;top:25px;font-size:11px;color:#a0a0a0;font-weight:normal;letter-spacing:-0.6px">150</div>
<div class="t" style="left:1233.5px;top:25px;font-size:11px;color:#a0a0a0;font-weight:normal;letter-spacing:-0.6px">155</div>
<div class="t" style="left:1273.5px;top:25px;font-size:11px;color:#a0a0a0;font-weight:normal;letter-spacing:-0.6px">160</div>
<div class="t" style="left:1313.5px;top:25px;font-size:11px;color:#a0a0a0;font-weight:normal;letter-spacing:-0.6px">165</div>
<div class="t" style="left:1353.5px;top:25px;font-size:11px;color:#a0a0a0;font-weight:normal;letter-spacing:-0.6px">170</div>
<div class="t" style="left:1393.5px;top:25px;font-size:11px;color:#a0a0a0;font-weight:normal;letter-spacing:-0.6px">175</div>
<div class="t" style="left:1433.5px;top:25px;font-size:11px;color:#a0a0a0;font-weight:normal;letter-spacing:-0.6px">180</div>
<div class="t" style="left:1473.5px;top:25px;font-size:11px;color:#a0a0a0;font-weight:normal;letter-spacing:-0.6px">185</div>
</div>
<div class="t" style="left:649px;top:109px;font-size:10px;color:#a0a0a0;font-weight:normal;font-style:italic">1s</div>
<div class="t" style="left:889px;top:109px;font-size:10px;color:#a0a0a0;font-weight:normal;font-style:italic">2s</div>
<div class="t" style="left:1129px;top:109px;font-size:10px;color:#a0a0a0;font-weight:normal;font-style:italic">3s</div>
<div class="t" style="left:1369px;top:109px;font-size:10px;color:#a0a0a0;font-weight:normal;font-style:italic">4s</div>
<div class="t" style="left:1609px;top:109px;font-size:10px;color:#a0a0a0;font-weight:normal;font-style:italic">5s</div>
<div class="t" style="left:1849px;top:109px;font-size:10px;color:#a0a0a0;font-weight:normal;font-style:italic">6s</div>
<div class="a" style="left:52px;top:165px;width:363px;height:1px;background:#262626;"></div>
<div class="a" style="left:52px;top:166px;width:363px;height:15px;background:#35629a;"></div>
<div class="a" style="left:52px;top:181px;width:1851px;height:1px;background:#262626;"></div>
<svg style="left:81px;top:150px;" width="12" height="12" viewBox="0 0 12 12"><path d="M0.5 0.5H11.5V7.5L7.5 11.5H0.5Z" fill="none" stroke="#c8c8c8" stroke-width="1"/><path d="M7.5 11.5V7.5H11.5" fill="none" stroke="#c8c8c8" stroke-width="1"/><rect x="2" y="2" width="8" height="5" fill="#555"/></svg>
<svg style="left:81px;top:168px;" width="12" height="12" viewBox="0 0 12 12"><path d="M0.5 0.5H11.5V7.5L7.5 11.5H0.5Z" fill="none" stroke="#e0e0e0" stroke-width="1"/><path d="M7.5 11.5V7.5H11.5" fill="none" stroke="#e0e0e0" stroke-width="1"/></svg>
<div class="t" style="left:104px;top:151px;font-size:11px;color:#d8d8d8;font-weight:normal;">Слой_4</div>
<div class="t" style="left:104px;top:170px;font-size:11px;color:#f0f0f0;font-weight:normal;">Слой_5</div>
<div class="a" style="left:336px;top:150px;width:6px;height:12px;background:#ff45ff;"></div>
<div class="a" style="left:336px;top:169px;width:6px;height:12px;background:#00a19a;"></div>
<svg style="left:385px;top:150px;" width="9" height="11" viewBox="0 0 9 11"><path d="M2 5V3.5A2.5 2.5 0 0 1 7 3.5V5" stroke="#c8c8c8" stroke-width="1.5" fill="none"/><rect x="0.5" y="5" width="8" height="6" fill="#c8c8c8"/><rect x="3.8" y="6.8" width="1.4" height="2.5" fill="#323232"/></svg>
<svg style="left:416px;top:147px;" width="1487" height="34" viewBox="0 0 1487 34"><rect x="0" y="0" width="1487" height="35" fill="#2c2c2c"/><rect x="7" y="0" width="1" height="35" fill="#1f1f1f"/><rect x="15" y="0" width="1" height="35" fill="#1f1f1f"/><rect x="23" y="0" width="1" height="35" fill="#1f1f1f"/><rect x="31" y="0" width="1" height="35" fill="#1f1f1f"/><rect x="32" y="0" width="7" height="35" fill="#3a3a3a"/><rect x="39" y="0" width="1" height="35" fill="#1f1f1f"/><rect x="47" y="0" width="1" height="35" fill="#1f1f1f"/><rect x="55" y="0" width="1" height="35" fill="#1f1f1f"/><rect x="63" y="0" width="1" height="35" fill="#1f1f1f"/><rect x="71" y="0" width="1" height="35" fill="#1f1f1f"/><rect x="72" y="0" width="7" height="35" fill="#3a3a3a"/><rect x="79" y="0" width="1" height="35" fill="#1f1f1f"/><rect x="87" y="0" width="1" height="35" fill="#1f1f1f"/><rect x="95" y="0" width="1" height="35" fill="#1f1f1f"/><rect x="103" y="0" width="1" height="35" fill="#1f1f1f"/><rect x="111" y="0" width="1" height="35" fill="#1f1f1f"/><rect x="112" y="0" width="7" height="35" fill="#3a3a3a"/><rect x="119" y="0" width="1" height="35" fill="#1f1f1f"/><rect x="127" y="0" width="1" height="35" fill="#1f1f1f"/><rect x="135" y="0" width="1" height="35" fill="#1f1f1f"/><rect x="143" y="0" width="1" height="35" fill="#1f1f1f"/><rect x="151" y="0" width="1" height="35" fill="#1f1f1f"/><rect x="152" y="0" width="7" height="35" fill="#3a3a3a"/><rect x="159" y="0" width="1" height="35" fill="#1f1f1f"/><rect x="167" y="0" width="1" height="35" fill="#1f1f1f"/><rect x="175" y="0" width="1" height="35" fill="#1f1f1f"/><rect x="183" y="0" width="1" height="35" fill="#1f1f1f"/><rect x="191" y="0" width="1" height="35" fill="#1f1f1f"/><rect x="192" y="0" width="7" height="35" fill="#3a3a3a"/><rect x="199" y="0" width="1" height="35" fill="#1f1f1f"/><rect x="207" y="0" width="1" height="35" fill="#1f1f1f"/><rect x="215" y="0" width="1" height="35" fill="#1f1f1f"/><rect x="223" y="0" width="1" height="35" fill="#1f1f1f"/><rect x="231" y="0" width="1" height="35" fill="#1f1f1f"/><rect x="232" y="0" width="7" height="35" fill="#3a3a3a"/><rect x="239" y="0" width="1" height="35" fill="#1f1f1f"/><rect x="247" y="0" width="1" height="35" fill="#1f1f1f"/><rect x="255" y="0" width="1" height="35" fill="#1f1f1f"/><rect x="263" y="0" width="1" height="35" fill="#1f1f1f"/><rect x="271" y="0" width="1" height="35" fill="#1f1f1f"/><rect x="272" y="0" width="7" height="35" fill="#3a3a3a"/><rect x="279" y="0" width="1" height="35" fill="#1f1f1f"/><rect x="287" y="0" width="1" height="35" fill="#1f1f1f"/><rect x="295" y="0" width="1" height="35" fill="#1f1f1f"/><rect x="303" y="0" width="1" height="35" fill="#1f1f1f"/><rect x="311" y="0" width="1" height="35" fill="#1f1f1f"/><rect x="312" y="0" width="7" height="35" fill="#3a3a3a"/><rect x="319" y="0" width="1" height="35" fill="#1f1f1f"/><rect x="327" y="0" width="1" height="35" fill="#1f1f1f"/><rect x="335" y="0" width="1" height="35" fill="#1f1f1f"/><rect x="343" y="0" width="1" height="35" fill="#1f1f1f"/><rect x="351" y="0" width="1" height="35" fill="#1f1f1f"/><rect x="352" y="0" width="7" height="35" fill="#3a3a3a"/><rect x="359" y="0" width="1" height="35" fill="#1f1f1f"/><rect x="367" y="0" width="1" height="35" fill="#1f1f1f"/><rect x="375" y="0" width="1" height="35" fill="#1f1f1f"/><rect x="383" y="0" width="1" height="35" fill="#1f1f1f"/><rect x="391" y="0" width="1" height="35" fill="#1f1f1f"/><rect x="392" y="0" width="7" height="35" fill="#3a3a3a"/><rect x="399" y="0" width="1" height="35" fill="#1f1f1f"/><rect x="407" y="0" width="1" height="35" fill="#1f1f1f"/><rect x="415" y="0" width="1" height="35" fill="#1f1f1f"/><rect x="423" y="0" width="1" height="35" fill="#1f1f1f"/><rect x="431" y="0" width="1" height="35" fill="#1f1f1f"/><rect x="432" y="0" width="7" height="35" fill="#3a3a3a"/><rect x="439" y="0" width="1" height="35" fill="#1f1f1f"/><rect x="447" y="0" width="1" height="35" fill="#1f1f1f"/><rect x="455" y="0" width="1" height="35" fill="#1f1f1f"/><rect x="463" y="0" width="1" height="35" fill="#1f1f1f"/><rect x="471" y="0" width="1" height="35" fill="#1f1f1f"/><rect x="472" y="0" width="7" height="35" fill="#3a3a3a"/><rect x="479" y="0" width="1" height="35" fill="#1f1f1f"/><rect x="487" y="0" width="1" height="35" fill="#1f1f1f"/><rect x="495" y="0" width="1" height="35" fill="#1f1f1f"/><rect x="503" y="0" width="1" height="35" fill="#1f1f1f"/><rect x="511" y="0" width="1" height="35" fill="#1f1f1f"/><rect x="512" y="0" width="7" height="35" fill="#3a3a3a"/><rect x="519" y="0" width="1" height="35" fill="#1f1f1f"/><rect x="527" y="0" width="1" height="35" fill="#1f1f1f"/><rect x="535" y="0" width="1" height="35" fill="#1f1f1f"/><rect x="543" y="0" width="1" height="35" fill="#1f1f1f"/><rect x="551" y="0" width="1" height="35" fill="#1f1f1f"/><rect x="552" y="0" width="7" height="35" fill="#3a3a3a"/><rect x="559" y="0" width="1" height="35" fill="#1f1f1f"/><rect x="567" y="0" width="1" height="35" fill="#1f1f1f"/><rect x="575" y="0" width="1" height="35" fill="#1f1f1f"/><rect x="583" y="0" width="1" height="35" fill="#1f1f1f"/><rect x="591" y="0" width="1" height="35" fill="#1f1f1f"/><rect x="592" y="0" width="7" height="35" fill="#3a3a3a"/><rect x="599" y="0" width="1" height="35" fill="#1f1f1f"/><rect x="607" y="0" width="1" height="35" fill="#1f1f1f"/><rect x="615" y="0" width="1" height="35" fill="#1f1f1f"/><rect x="623" y="0" width="1" height="35" fill="#1f1f1f"/><rect x="631" y="0" width="1" height="35" fill="#1f1f1f"/><rect x="632" y="0" width="7" height="35" fill="#3a3a3a"/><rect x="639" y="0" width="1" height="35" fill="#1f1f1f"/><rect x="647" y="0" width="1" height="35" fill="#1f1f1f"/><rect x="655" y="0" width="1" height="35" fill="#1f1f1f"/><rect x="663" y="0" width="1" height="35" fill="#1f1f1f"/><rect x="671" y="0" width="1" height="35" fill="#1f1f1f"/><rect x="672" y="0" width="7" height="35" fill="#3a3a3a"/><rect x="679" y="0" width="1" height="35" fill="#1f1f1f"/><rect x="687" y="0" width="1" height="35" fill="#1f1f1f"/><rect x="695" y="0" width="1" height="35" fill="#1f1f1f"/><rect x="703" y="0" width="1" height="35" fill="#1f1f1f"/><rect x="711" y="0" width="1" height="35" fill="#1f1f1f"/><rect x="712" y="0" width="7" height="35" fill="#3a3a3a"/><rect x="719" y="0" width="1" height="35" fill="#1f1f1f"/><rect x="727" y="0" width="1" height="35" fill="#1f1f1f"/><rect x="735" y="0" width="1" height="35" fill="#1f1f1f"/><rect x="743" y="0" width="1" height="35" fill="#1f1f1f"/><rect x="751" y="0" width="1" height="35" fill="#1f1f1f"/><rect x="752" y="0" width="7" height="35" fill="#3a3a3a"/><rect x="759" y="0" width="1" height="35" fill="#1f1f1f"/><rect x="767" y="0" width="1" height="35" fill="#1f1f1f"/><rect x="775" y="0" width="1" height="35" fill="#1f1f1f"/><rect x="783" y="0" width="1" height="35" fill="#1f1f1f"/><rect x="791" y="0" width="1" height="35" fill="#1f1f1f"/><rect x="792" y="0" width="7" height="35" fill="#3a3a3a"/><rect x="799" y="0" width="1" height="35" fill="#1f1f1f"/><rect x="807" y="0" width="1" height="35" fill="#1f1f1f"/><rect x="815" y="0" width="1" height="35" fill="#1f1f1f"/><rect x="823" y="0" width="1" height="35" fill="#1f1f1f"/><rect x="831" y="0" width="1" height="35" fill="#1f1f1f"/><rect x="832" y="0" width="7" height="35" fill="#3a3a3a"/><rect x="839" y="0" width="1" height="35" fill="#1f1f1f"/><rect x="847" y="0" width="1" height="35" fill="#1f1f1f"/><rect x="855" y="0" width="1" height="35" fill="#1f1f1f"/><rect x="863" y="0" width="1" height="35" fill="#1f1f1f"/><rect x="871" y="0" width="1" height="35" fill="#1f1f1f"/><rect x="872" y="0" width="7" height="35" fill="#3a3a3a"/><rect x="879" y="0" width="1" height="35" fill="#1f1f1f"/><rect x="887" y="0" width="1" height="35" fill="#1f1f1f"/><rect x="895" y="0" width="1" height="35" fill="#1f1f1f"/><rect x="903" y="0" width="1" height="35" fill="#1f1f1f"/><rect x="911" y="0" width="1" height="35" fill="#1f1f1f"/><rect x="912" y="0" width="7" height="35" fill="#3a3a3a"/><rect x="919" y="0" width="1" height="35" fill="#1f1f1f"/><rect x="927" y="0" width="1" height="35" fill="#1f1f1f"/><rect x="935" y="0" width="1" height="35" fill="#1f1f1f"/><rect x="943" y="0" width="1" height="35" fill="#1f1f1f"/><rect x="951" y="0" width="1" height="35" fill="#1f1f1f"/><rect x="952" y="0" width="7" height="35" fill="#3a3a3a"/><rect x="959" y="0" width="1" height="35" fill="#1f1f1f"/><rect x="967" y="0" width="1" height="35" fill="#1f1f1f"/><rect x="975" y="0" width="1" height="35" fill="#1f1f1f"/><rect x="983" y="0" width="1" height="35" fill="#1f1f1f"/><rect x="991" y="0" width="1" height="35" fill="#1f1f1f"/><rect x="992" y="0" width="7" height="35" fill="#3a3a3a"/><rect x="999" y="0" width="1" height="35" fill="#1f1f1f"/><rect x="1007" y="0" width="1" height="35" fill="#1f1f1f"/><rect x="1015" y="0" width="1" height="35" fill="#1f1f1f"/><rect x="1023" y="0" width="1" height="35" fill="#1f1f1f"/><rect x="1031" y="0" width="1" height="35" fill="#1f1f1f"/><rect x="1032" y="0" width="7" height="35" fill="#3a3a3a"/><rect x="1039" y="0" width="1" height="35" fill="#1f1f1f"/><rect x="1047" y="0" width="1" height="35" fill="#1f1f1f"/><rect x="1055" y="0" width="1" height="35" fill="#1f1f1f"/><rect x="1063" y="0" width="1" height="35" fill="#1f1f1f"/><rect x="1071" y="0" width="1" height="35" fill="#1f1f1f"/><rect x="1072" y="0" width="7" height="35" fill="#3a3a3a"/><rect x="1079" y="0" width="1" height="35" fill="#1f1f1f"/><rect x="1087" y="0" width="1" height="35" fill="#1f1f1f"/><rect x="1095" y="0" width="1" height="35" fill="#1f1f1f"/><rect x="1103" y="0" width="1" height="35" fill="#1f1f1f"/><rect x="1111" y="0" width="1" height="35" fill="#1f1f1f"/><rect x="1112" y="0" width="7" height="35" fill="#3a3a3a"/><rect x="1119" y="0" width="1" height="35" fill="#1f1f1f"/><rect x="1127" y="0" width="1" height="35" fill="#1f1f1f"/><rect x="1135" y="0" width="1" height="35" fill="#1f1f1f"/><rect x="1143" y="0" width="1" height="35" fill="#1f1f1f"/><rect x="1151" y="0" width="1" height="35" fill="#1f1f1f"/><rect x="1152" y="0" width="7" height="35" fill="#3a3a3a"/><rect x="1159" y="0" width="1" height="35" fill="#1f1f1f"/><rect x="1167" y="0" width="1" height="35" fill="#1f1f1f"/><rect x="1175" y="0" width="1" height="35" fill="#1f1f1f"/><rect x="1183" y="0" width="1" height="35" fill="#1f1f1f"/><rect x="1191" y="0" width="1" height="35" fill="#1f1f1f"/><rect x="1192" y="0" width="7" height="35" fill="#3a3a3a"/><rect x="1199" y="0" width="1" height="35" fill="#1f1f1f"/><rect x="1207" y="0" width="1" height="35" fill="#1f1f1f"/><rect x="1215" y="0" width="1" height="35" fill="#1f1f1f"/><rect x="1223" y="0" width="1" height="35" fill="#1f1f1f"/><rect x="1231" y="0" width="1" height="35" fill="#1f1f1f"/><rect x="1232" y="0" width="7" height="35" fill="#3a3a3a"/><rect x="1239" y="0" width="1" height="35" fill="#1f1f1f"/><rect x="1247" y="0" width="1" height="35" fill="#1f1f1f"/><rect x="1255" y="0" width="1" height="35" fill="#1f1f1f"/><rect x="1263" y="0" width="1" height="35" fill="#1f1f1f"/><rect x="1271" y="0" width="1" height="35" fill="#1f1f1f"/><rect x="1272" y="0" width="7" height="35" fill="#3a3a3a"/><rect x="1279" y="0" width="1" height="35" fill="#1f1f1f"/><rect x="1287" y="0" width="1" height="35" fill="#1f1f1f"/><rect x="1295" y="0" width="1" height="35" fill="#1f1f1f"/><rect x="1303" y="0" width="1" height="35" fill="#1f1f1f"/><rect x="1311" y="0" width="1" height="35" fill="#1f1f1f"/><rect x="1312" y="0" width="7" height="35" fill="#3a3a3a"/><rect x="1319" y="0" width="1" height="35" fill="#1f1f1f"/><rect x="1327" y="0" width="1" height="35" fill="#1f1f1f"/><rect x="1335" y="0" width="1" height="35" fill="#1f1f1f"/><rect x="1343" y="0" width="1" height="35" fill="#1f1f1f"/><rect x="1351" y="0" width="1" height="35" fill="#1f1f1f"/><rect x="1352" y="0" width="7" height="35" fill="#3a3a3a"/><rect x="1359" y="0" width="1" height="35" fill="#1f1f1f"/><rect x="1367" y="0" width="1" height="35" fill="#1f1f1f"/><rect x="1375" y="0" width="1" height="35" fill="#1f1f1f"/><rect x="1383" y="0" width="1" height="35" fill="#1f1f1f"/><rect x="1391" y="0" width="1" height="35" fill="#1f1f1f"/><rect x="1392" y="0" width="7" height="35" fill="#3a3a3a"/><rect x="1399" y="0" width="1" height="35" fill="#1f1f1f"/><rect x="1407" y="0" width="1" height="35" fill="#1f1f1f"/><rect x="1415" y="0" width="1" height="35" fill="#1f1f1f"/><rect x="1423" y="0" width="1" height="35" fill="#1f1f1f"/><rect x="1431" y="0" width="1" height="35" fill="#1f1f1f"/><rect x="1432" y="0" width="7" height="35" fill="#3a3a3a"/><rect x="1439" y="0" width="1" height="35" fill="#1f1f1f"/><rect x="1447" y="0" width="1" height="35" fill="#1f1f1f"/><rect x="1455" y="0" width="1" height="35" fill="#1f1f1f"/><rect x="1463" y="0" width="1" height="35" fill="#1f1f1f"/><rect x="1471" y="0" width="1" height="35" fill="#1f1f1f"/><rect x="1472" y="0" width="7" height="35" fill="#3a3a3a"/><rect x="1479" y="0" width="1" height="35" fill="#1f1f1f"/><rect x="1487" y="0" width="1" height="35" fill="#1f1f1f"/><rect x="0" y="18" width="1487" height="1" fill="#1f1f1f"/></svg>
<div class="a" style="left:416px;top:147px;width:7px;height:34px;background:#c4c4c4;"></div>
<div class="a" style="left:416px;top:165px;width:7px;height:1px;background:#1f1f1f;"></div>
<svg style="left:416px;top:154px;" width="7" height="27" viewBox="0 0 7 27"><circle cx="3.5" cy="4" r="3" fill="#111"/><circle cx="3.5" cy="23" r="3" fill="#111"/></svg>
<svg style="left:416px;top:106px;" width="7" height="76" viewBox="0 0 7 76"><path d="M0 0H7V36L3.5 41L0 36Z" fill="#3d8ee8"/><rect x="3" y="40" width="1.4" height="36" fill="#3d8ee8"/></svg>
<div class="a" style="left:417px;top:188px;width:400px;height:4px;background:#707070;border-radius:2px"></div>
<div class="a" style="left:52px;top:197px;width:1868px;height:1px;background:#2a2a2a;"></div>
<div class="a" style="left:52px;top:198px;width:1868px;height:3px;background:#1e1e1e;"></div>
<div class="a" style="left:52px;top:201px;width:1868px;height:19px;background:#2e2e2e;"></div>
<div class="a" style="left:168px;top:201px;width:1px;height:19px;background:#1e1e1e;"></div>
<div class="a" style="left:291px;top:201px;width:1px;height:19px;background:#1e1e1e;"></div>
<div class="t" style="left:61px;top:205px;font-size:11px;color:#7a7a7a;font-weight:bold;">Безымянный-1</div>
<svg style="left:151px;top:208px;" width="6" height="6" viewBox="0 0 6 6"><path d="M0.5 0.5L5.5 5.5M5.5 0.5L0.5 5.5" stroke="#a0a0a0" stroke-width="1.6"/></svg>
<div class="t" style="left:178px;top:205px;font-size:11px;color:#f4f4f4;font-weight:bold;">Безымянный-2*</div>
<svg style="left:274px;top:208px;" width="6" height="6" viewBox="0 0 6 6"><path d="M0.5 0.5L5.5 5.5M5.5 0.5L0.5 5.5" stroke="#b0b0b0" stroke-width="1.6"/></svg>
<div class="a" style="left:52px;top:220px;width:1868px;height:1px;background:#222;"></div>
<div class="a" style="left:52px;top:221px;width:1868px;height:34px;background:#323232;"></div>
<svg style="left:67px;top:229px;" width="18" height="18" viewBox="0 0 18 18"><circle cx="9" cy="4.5" r="4" fill="#c8c8c8"/><circle cx="4.5" cy="10" r="4" fill="#c8c8c8"/><circle cx="13.5" cy="10" r="4" fill="#c8c8c8"/><path d="M9 8L11.5 17H6.5Z" fill="#c8c8c8"/><path d="M16 16L18 14V16Z" fill="#c8c8c8"/></svg>
<div class="a" style="left:100px;top:226px;width:1px;height:24px;background:#444;"></div>
<div class="t" style="left:121px;top:232px;font-size:13px;color:#dcdcdc;font-weight:normal;">Монта...</div>
<svg style="left:190px;top:234px;" width="11" height="7" viewBox="0 0 11 7"><path d="M1 1L5.5 5.5L10 1" stroke="#c8c8c8" stroke-width="1.8" fill="none"/></svg>
<svg style="left:1719px;top:230px;" width="15" height="15" viewBox="0 0 15 15"><path d="M7.5 0V15M0 7.5H15" stroke="#c8c8c8" stroke-width="1.2"/><rect x="3.5" y="3.5" width="8" height="8" fill="none" stroke="#c8c8c8" stroke-width="1.2"/></svg>
<svg style="left:1750px;top:229px;" width="18" height="18" viewBox="0 0 18 18"><path d="M3 9C2 7 3 6 4.5 7L5 8V3.5C5 2.5 6.5 2.5 6.5 3.5V7V2.5C6.5 1.5 8 1.5 8 2.5V7V3C8 2 9.5 2 9.5 3V7.5V4.5C9.5 3.5 11 3.5 11 4.5V10C11 14 9 16 7 16C5 16 4 14.5 3 9Z" fill="#c8c8c8"/><path d="M12 5L17 10L12 15" stroke="#c8c8c8" stroke-width="1.2" fill="none"/><path d="M5 0.5C6 -0.5 8 -0.5 9 1" stroke="#c8c8c8" stroke-width="1" fill="none"/></svg>
<svg style="left:1783px;top:230px;" width="16" height="16" viewBox="0 0 16 16"><rect x="0" y="0" width="15" height="15" fill="#555"/><rect x="3" y="3" width="9" height="9" fill="#323232" stroke="#c8c8c8" stroke-width="1.3"/></svg>
<div class="a" style="left:1811px;top:226px;width:15px;height:24px;background:#383838;"></div>
<svg style="left:1814px;top:229px;" width="9" height="18" viewBox="0 0 9 18"><path d="M1 5L4.5 1.5L8 5M1 13L4.5 16.5L8 13" stroke="#c8c8c8" stroke-width="1.1" fill="none"/></svg>
<div class="a" style="left:1829px;top:226px;width:65px;height:24px;background:#1f1f1f;border:1px solid #4a4a4a"></div>
<div class="t" style="left:1843px;top:232px;font-size:13px;color:#f0f0f0;font-weight:normal;">100%</div>
<div class="a" style="left:1894px;top:226px;width:17px;height:24px;background:#383838;"></div>
<svg style="left:1897px;top:235px;" width="10" height="6" viewBox="0 0 10 6"><path d="M1 1L5 5L9 1" stroke="#c8c8c8" stroke-width="1.1" fill="none"/></svg>
<div class="a" style="left:52px;top:255px;width:1868px;height:785px;background:#262626;"></div>
<div class="a" style="left:52px;top:255px;width:1851px;height:768px;background:#ffffff;"></div>
<div class="a" style="left:469px;top:1028px;width:955px;height:4px;background:#6e6e6e;border-radius:2px"></div>
<div class="a" style="left:1909px;top:520px;width:4px;height:234px;background:#5e5e5e;border-radius:2px"></div>
<svg style="left:0;top:0" width="1920" height="1080" viewBox="0 0 1920 1080">
<g stroke="#000" stroke-width="3" stroke-linejoin="round" stroke-linecap="round">
<!-- right hand behind -->
<path d="M758,742 C768,741 778,740 782,742 C784,752 783,768 776,780 C770,792 760,798 751,802 L750,760 Z" fill="#fbd9a6"/>
<path d="M768,752 C767,766 761,776 751,783" fill="none" stroke-width="2.5"/>
<!-- shoes -->
<path d="M592,942 L687,942 L745,939 C760,948 773,960 780,975 C784,985 783,995 778,998 C760,1004 720,1003 693,1000 C688,1004 670,1007 640,1007 C620,1006 600,1000 586,997 C587,980 590,960 592,942 Z" fill="#000"/>
<g stroke="none" fill="#cdc3c3">
<path d="M589,988 C605,991 620,993 632,993 C636,985 642,980 650,980 C660,980 668,985 670,992 L690,992 C689,1000 670,1004 650,1004 C630,1005 605,1000 589,994 Z"/>
<path d="M620,950 L665,950 L661,955 L667,962 L668,966 L621,966 L625,958 Z"/>
<path d="M694,989 C720,990 745,991 763,990 C762,980 765,972 773,970 C779,975 782,985 780,993 C775,998 760,1001 735,1001 C715,1000 700,999 694,997 Z"/>
<path d="M714,951 C725,948 738,944 745,941 C752,945 756,948 757,951 C750,955 742,960 735,965 C728,962 722,958 714,954 Z"/>
</g>
<path d="M692,990 C691,995 692,999 694,1000" fill="none" stroke-width="2.5"/>
<!-- pants -->
<path d="M598,758 L750,758 C750,800 750,850 749,900 C748,915 748,922 747,930 C745,940 738,944 728,944 L690,942 C684,941 682,939 681,936 C679,944 672,948 657,948 L614,948 C598,948 589,942 589,928 C589,880 594,810 598,758 Z" fill="#333333"/>
<path d="M681,937 C683,900 687,840 689,802" fill="none" stroke-width="2.5"/>
<path d="M676.5,801 C690,800 700,799 711.5,797" fill="none" stroke-width="2.5"/>
<!-- torso + arm -->
<path d="M612,570 L606,600 C600,620 598,640 597,680 L592,750 L597,763 C620,767 660,770 705,768 L750,762 C755,757 758,752 758,745 L761,744 C772,742 785,740 790,729 C792,715 790,690 789,680 C786,650 776,615 753,586 C752,575 750,565 745,556 L690,540 L610,540 L612,576 Z" fill="#cc0000"/>
<!-- hood inner band -->
<path d="M640,560 L640,585 C665,588 695,590 721,592 L722,560 Z" fill="#aa0000"/>
<path d="M678,595 L718,595 L711,607 Z" fill="#cdc3cc" stroke="none"/>
<path d="M640,586 C652,589 664,592 676,596.5 C690,600 700,604 710,607 C718,598 725,588 731,578" fill="none"/>
<path d="M631,572.5 L639,577.5" fill="none"/>
<path d="M610,564 C611,575 614,584 620,590 C635,602 660,612 692,619" fill="none"/>
<path d="M617,592 C630,602 650,610 672,615" fill="none" stroke-width="2.5"/>
<path d="M750,564 C753,575 752,586 747,594 C740,604 725,613 711,619" fill="none"/>
<!-- drawstrings -->
<path d="M661,614 L682,617 L680.5,680 L658.5,680 Z" fill="#b00000" stroke="none"/>
<path d="M714,619 L730.5,611 L732,677 L716.5,677 Z" fill="#b00000" stroke="none"/>
<path d="M659,677 C652,678 649,682 650.5,686 C652,690 655,692 658,693 C657,698 662,702 668,702 C675,702 679,699 678.5,693.5 C684,693 689,690 688.5,686 C688,680 684,677 680,676.5 Z" fill="#b00000" stroke="none"/>
<path d="M661,613 L659,677 C652,678 649,682 650.5,686 C652,690 655,692 658,693 C657,698 662,702 668,702 C675,702 679,699 678.5,693.5 C684,693 689,690 688.5,686 C688,680 684,677 680,676.5 L682,617" fill="none" stroke-width="2.8"/>
<path d="M659,677.5 L663,677.5 M657.5,693.3 L666,693.6 M675,692 L679,692 M677,676.2 L681,676.5" fill="none" stroke-width="2.6"/>
<path d="M715.5,675 C710,676 707,680 707.5,683.5 C708,687 710,688 712,688.5 C711.5,694 717,698.5 724,698.5 C730,698.5 733,695 732,690 C736,689 737.5,686 737,682 C736.5,678 733,676 730,675.5 Z" fill="#b00000" stroke="none"/>
<path d="M714,619 L715.5,675 C710,676 707,680 707.5,683.5 C708,687 710,688 712,688.5 C711.5,694 717,698.5 724,698.5 C730,698.5 733,695 732,690 C736,689 737.5,686 737,682 C736.5,678 733,676 730,675.5 L730.5,611" fill="none" stroke-width="2.8"/>
<path d="M715.5,675 L720,674.6 M712,688.2 L718,688.2 M723.6,689 L731,689.5 M725.7,675 L730,675.5" fill="none" stroke-width="2.6"/>
<path d="M683,619 L694,620" fill="none" stroke-width="2.5"/>
<!-- pocket lines -->
<path d="M630,697 C632,722 642,740 663,755" fill="none" stroke-width="2.5"/>
<path d="M741.5,694 C740,718 730,738 712,754" fill="none" stroke-width="2.5"/>
<path d="M751.5,631 C754,660 757,700 759,749" fill="none" stroke-width="2.5"/>
<!-- hand -->
<path d="M600,700 C610,694 620,697 628,705 C633,715 633,738 622,749 C614,753 600,753 592,749 C585,748 578,746 574,743 C570,738 570,729 576,725.5 C580,723 584,723 588,723 Z" fill="#fbd9a6"/>
<path d="M587.5,723.5 C582,730 582,741 585,747" fill="none" stroke-width="2.6"/>
<path d="M597,727 C592.5,733 592,742 596,749" fill="none" stroke-width="2.6"/>
<path d="M597,727 C601,724 606,723.5 611,724.5" fill="none" stroke-width="2.6"/>
<path d="M608,710 C612,715 615,722 614.5,728 C614,732 613.5,735 613.5,737" fill="none" stroke-width="2.6"/>
<path d="M586,723.5 C590,722 594,723 597,727" fill="none" stroke-width="2.6"/>
<!-- arm -->
<path d="M612,576 C590,580 562,590 545,606 C525,624 513,648 513,668 C514,690 540,706 578,720 C592,718 604,706 607,694 C608,688 603,680 594,677 C585,672 573,664 573,655 C573,645 588,637 601,636.5 L610,600 Z" fill="#cc0000" stroke="none"/>
<path d="M612,576 C590,580 562,590 545,606 C525,624 513,648 513,668 C514,690 540,706 578,720 C592,718 604,706 607,694 C608,688 603,680 594,677 C585,672 573,664 573,655 C573,645 588,637 601,636.5" fill="none"/>
<!-- arm hole -->
<path d="M601,636.5 C588,637 573,645 573,655 C573,664 585,672 597.5,678 Z" fill="#ffffff" stroke="none"/>
<path d="M601,636.5 C588,637 573,645 573,655 C573,664 585,672 594,677" fill="none"/>
<path d="M601,636.5 L597.5,678" fill="none" stroke-width="2.8"/>
<!-- hair -->
<path d="M592,558 L610,549 C603,547 596,546 590,542 C585,538 580,535 577,532 C585,531 592,530 600,529.5 L605,520 L594,490 L593,470 C594,460 597,452 600,445.5 L585.5,448 C589,443 591,440 593.5,435.5 L580,420 C592,420 602,421 611,421.5 C611,410 614,398 621.5,389.5 C625,395 629,402 633.5,409 C645,400 655,395 664,391.5 C668,381 672,371 676.5,360.5 C690,365 702,375 711,389 L712,389.5 C719,380 727,370 736,361.5 C748,370 757,383 763,400 C766,410 767,416 766.5,421 C779,427 789,437 794.5,450.5 C788,449 781,447 775.5,446 C780,460 781,470 780,490 L700,560 L640,565 L610,564.5 C605,561 598,559 592,558 Z" fill="#b97b40"/>
<path d="M593.5,435.5 L612,422 L633.5,409" fill="none"/>
<path d="M619,540 C613,548 610,556 611,565" fill="none" stroke-width="2.6"/>
<!-- right ear -->
<ellipse cx="775" cy="504" rx="13" ry="29" transform="rotate(12 775 504)" fill="#fbd9a6"/>
<!-- head -->
<ellipse cx="691" cy="483" rx="87" ry="94.5" fill="#fcdca7"/>
<!-- left ear -->
<ellipse cx="618" cy="503.5" rx="25.5" ry="32.5" transform="rotate(-4 618 503.5)" fill="#fcdca7"/>
</g>
</svg>

<div class="a" style="left:1424px;top:313px;width:472px;height:727px;background:#323232;border-radius:5px 5px 0 0;box-shadow:0 0 3px rgba(0,0,0,0.25)"></div>
<div class="a" style="left:1424px;top:313px;width:472px;height:13px;background:#2a2a2a;border-radius:5px 5px 0 0"></div>
<div class="a" style="left:1424px;top:326px;width:472px;height:1px;background:#1e1e1e;"></div>
<div class="a" style="left:1424px;top:327px;width:472px;height:17px;background:#262626;"></div>
<div class="a" style="left:1498px;top:327px;width:60px;height:17px;background:#323232;"></div>
<div class="t" style="left:1432px;top:330px;font-size:10px;color:#7c7c7c;font-weight:bold;">Библиотека</div>
<div class="t" style="left:1505px;top:330px;font-size:10px;color:#f0f0f0;font-weight:bold;">Свойства</div>
<svg style="left:1865px;top:317px;" width="7" height="6" viewBox="0 0 7 6"><path d="M3 0.5L0.7 3L3 5.5M6.5 0.5L4.2 3L6.5 5.5" stroke="#c8c8c8" stroke-width="1.3" fill="none"/></svg>
<svg style="left:1883px;top:316px;" width="8" height="8" viewBox="0 0 8 8"><path d="M1 1L7 7M7 1L1 7" stroke="#c8c8c8" stroke-width="2"/></svg>
<svg style="left:1879px;top:331px;" width="10" height="7" viewBox="0 0 10 7"><path d="M0 0.5H10M0 2.5H10M0 4.5H10M0 6.5H10" stroke="#c8c8c8" stroke-width="1"/></svg>
<div class="a" style="left:1503px;top:355px;width:95px;height:32px;background:#4a4a4a;border-radius:4px"></div>
<div class="t" style="left:1514px;top:364px;font-size:13px;color:#f2f2f2;font-weight:normal;">Инструмент</div>
<div class="t" style="left:1613px;top:364px;font-size:13px;color:#7c7c7c;font-weight:normal;">Объект</div>
<div class="t" style="left:1692px;top:364px;font-size:13px;color:#7c7c7c;font-weight:normal;">Кадр</div>
<div class="t" style="left:1768px;top:364px;font-size:13px;color:#f0f0f0;font-weight:normal;">Док.</div>
<div class="a" style="left:1424px;top:393px;width:472px;height:2px;background:#262626;"></div>
<svg style="left:1452px;top:410px;" width="19" height="18" viewBox="0 0 19 18"><path d="M0.5 17.5C1 13.5 3 11 6.5 10.5L8.5 12.5C8 16 5 17.5 0.5 17.5Z" fill="#c8c8c8"/><path d="M7.5 9.5L15.5 1C16.5 0 18.2 1.5 17.2 2.6L9.2 11Z" fill="#c8c8c8"/><circle cx="13" cy="13.5" r="4.3" fill="#7a7a7a" stroke="#c8c8c8" stroke-width="1"/></svg>
<div class="t" style="left:1488px;top:413px;font-size:13px;color:#a0a0a0;font-weight:normal;">Инструмент «Плавная кисть»</div>
<div class="a" style="left:1424px;top:444px;width:472px;height:2px;background:#262626;"></div>
<div class="a" style="left:1445px;top:455px;width:32px;height:31px;border:1px solid #3a3a3a;background:#2b2b2b;border-radius:4px"></div>
<div class="a" style="left:1489px;top:455px;width:32px;height:31px;border:1px solid #3a3a3a;background:#2b2b2b;border-radius:4px"></div>
<div class="a" style="left:1534px;top:455px;width:36px;height:31px;border:1px solid #3a3a3a;background:#2b2b2b;border-radius:4px"></div>
<svg style="left:1453px;top:462px;" width="16" height="16" viewBox="0 0 16 16"><rect x="0.75" y="0.75" width="14" height="14" fill="none" stroke="#c8c8c8" stroke-width="1.3"/><circle cx="7.75" cy="7.75" r="6" fill="#888"/></svg>
<svg style="left:1496px;top:461px;" width="18" height="18" viewBox="0 0 18 18"><circle cx="8" cy="8" r="7" fill="#c8c8c8"/><rect x="-1" y="6" width="18" height="4" fill="#2b2b2b"/><path d="M-1 6H17M-1 10H17" stroke="#c8c8c8" stroke-width="1.2"/><path d="M2 8C4 6.8 5.5 9.2 8 8C10.5 6.8 12 9.2 14 8" stroke="#c8c8c8" stroke-width="1" fill="none"/><path d="M15 17L17 15V17Z" fill="#c8c8c8"/></svg>
<svg style="left:1543px;top:462px;" width="20" height="16" viewBox="0 0 20 16"><defs><linearGradient id="gl" x1="0" y1="0" x2="1" y2="0"><stop offset="0" stop-color="#111"/><stop offset="1" stop-color="#ddd"/></linearGradient></defs><rect x="0.75" y="0.75" width="14" height="13" fill="url(#gl)" stroke="#c8c8c8" stroke-width="1.3"/><path d="M11.5 9V7.5A2.5 2.5 0 0 1 16.5 7.5V9" stroke="#c8c8c8" stroke-width="1.5" fill="#2b2b2b"/><rect x="10" y="9" width="8" height="7" fill="#c8c8c8"/><rect x="13.3" y="11" width="1.4" height="2.5" fill="#2b2b2b"/></svg>
<div class="a" style="left:1581px;top:456px;width:2px;height:28px;background:#3e3e3e;"></div>
<div class="a" style="left:1594px;top:455px;width:33px;height:31px;background:#505050;border-radius:4px"></div>
<svg style="left:1602px;top:462px;" width="18" height="16" viewBox="0 0 18 16"><path d="M0 14L1.5 9.5L10 1L13 4L4.5 12.5Z" fill="#c8c8c8"/><path d="M8 15.5H17M10 12.5H17M12 9.5H17" stroke="#c8c8c8" stroke-width="1.1"/></svg>
<div class="a" style="left:1424px;top:494px;width:472px;height:2px;background:#262626;"></div>
<div class="a" style="left:1885px;top:497px;width:4px;height:500px;background:#5a5a5a;border-radius:2px"></div>
<svg style="left:1445px;top:512px;" width="10" height="7" viewBox="0 0 10 7"><path d="M1 1L5 5L9 1" stroke="#c8c8c8" stroke-width="1.8" fill="none"/></svg>
<div class="t" style="left:1466px;top:510px;font-size:13px;color:#dedede;font-weight:bold;">Цвет и стиль</div>
<div class="a" style="left:1445px;top:553px;width:28px;height:14px;background:#bb0000;border-radius:2px"></div>
<div class="t" style="left:1484px;top:554px;font-size:13px;color:#d0d0d0;font-weight:normal;">Заливка</div>
<svg style="left:1806px;top:553px;" width="14" height="14" viewBox="0 0 14 14"><rect x="0" y="0" width="3" height="3" fill="#d0d0d0"/><rect x="0" y="3" width="3" height="3" fill="#333"/><rect x="0" y="6" width="3" height="3" fill="#d0d0d0"/><rect x="0" y="9" width="3" height="3" fill="#333"/><rect x="0" y="12" width="3" height="3" fill="#d0d0d0"/><rect x="3" y="0" width="3" height="3" fill="#333"/><rect x="3" y="3" width="3" height="3" fill="#d0d0d0"/><rect x="3" y="6" width="3" height="3" fill="#333"/><rect x="3" y="9" width="3" height="3" fill="#d0d0d0"/><rect x="3" y="12" width="3" height="3" fill="#333"/><rect x="6" y="0" width="3" height="3" fill="#d0d0d0"/><rect x="6" y="3" width="3" height="3" fill="#333"/><rect x="6" y="6" width="3" height="3" fill="#d0d0d0"/><rect x="6" y="9" width="3" height="3" fill="#333"/><rect x="6" y="12" width="3" height="3" fill="#d0d0d0"/><rect x="9" y="0" width="3" height="3" fill="#333"/><rect x="9" y="3" width="3" height="3" fill="#d0d0d0"/><rect x="9" y="6" width="3" height="3" fill="#333"/><rect x="9" y="9" width="3" height="3" fill="#d0d0d0"/><rect x="9" y="12" width="3" height="3" fill="#333"/><rect x="12" y="0" width="3" height="3" fill="#d0d0d0"/><rect x="12" y="3" width="3" height="3" fill="#333"/><rect x="12" y="6" width="3" height="3" fill="#d0d0d0"/><rect x="12" y="9" width="3" height="3" fill="#333"/><rect x="12" y="12" width="3" height="3" fill="#d0d0d0"/></svg>
<div class="t" style="left:1833px;top:554px;font-size:12.5px;color:#e0e0e0;font-weight:normal;">100 %</div>
<div class="a" style="left:1832px;top:577px;width:43px;height:1px;background:#4a4a4a;"></div>
<div class="a" style="left:1424px;top:591px;width:456px;height:2px;background:#262626;"></div>
<svg style="left:1445px;top:611px;" width="10" height="7" viewBox="0 0 10 7"><path d="M1 1L5 5L9 1" stroke="#c8c8c8" stroke-width="1.8" fill="none"/></svg>
<div class="t" style="left:1466px;top:608px;font-size:13px;color:#dedede;font-weight:bold;">Параметры гибкой кисти</div>
<div class="t" style="left:1446px;top:648px;font-size:11px;color:#a8a8a8;font-weight:normal;">Размер</div>
<div class="t" style="left:1774px;width:100px;text-align:right;top:647px;font-size:12.5px;color:#e0e0e0">3</div>
<div class="a" style="left:1446px;top:675px;width:428px;height:2px;background:#444444;"></div>
<div class="a" style="left:1449px;top:668px;width:16px;height:16px;border-radius:50%;border:2px solid #d0d0d0;background:#323232;box-shadow:0 0 0 3px #323232"></div>
<div class="t" style="left:1446px;top:698px;font-size:11px;color:#a8a8a8;font-weight:normal;">Стабилизатор</div>
<div class="t" style="left:1774px;width:100px;text-align:right;top:697px;font-size:12.5px;color:#e0e0e0">81</div>
<div class="a" style="left:1446px;top:725px;width:428px;height:2px;background:#444444;"></div>
<div class="a" style="left:1446px;top:725px;width:342px;height:2px;background:#cfcfcf;"></div>
<div class="a" style="left:1780px;top:718px;width:16px;height:16px;border-radius:50%;border:2px solid #d0d0d0;background:#323232;box-shadow:0 0 0 3px #323232"></div>
<div class="t" style="left:1446px;top:748px;font-size:11px;color:#a8a8a8;font-weight:normal;">Сглаживание кривой</div>
<div class="t" style="left:1774px;width:100px;text-align:right;top:747px;font-size:12.5px;color:#e0e0e0">64</div>
<div class="a" style="left:1446px;top:775px;width:428px;height:2px;background:#444444;"></div>
<div class="a" style="left:1446px;top:775px;width:272px;height:2px;background:#cfcfcf;"></div>
<div class="a" style="left:1710px;top:768px;width:16px;height:16px;border-radius:50%;border:2px solid #d0d0d0;background:#323232;box-shadow:0 0 0 3px #323232"></div>
<div class="t" style="left:1446px;top:798px;font-size:11px;color:#a8a8a8;font-weight:normal;">Закругленность</div>
<div class="t" style="left:1774px;width:100px;text-align:right;top:797px;font-size:12.5px;color:#e0e0e0">62</div>
<div class="a" style="left:1446px;top:825px;width:428px;height:2px;background:#444444;"></div>
<div class="a" style="left:1446px;top:825px;width:255px;height:2px;background:#cfcfcf;"></div>
<div class="a" style="left:1693px;top:818px;width:16px;height:16px;border-radius:50%;border:2px solid #d0d0d0;background:#323232;box-shadow:0 0 0 3px #323232"></div>
<div class="t" style="left:1446px;top:848px;font-size:11px;color:#a8a8a8;font-weight:normal;">Угол</div>
<div class="t" style="left:1774px;width:100px;text-align:right;top:847px;font-size:12.5px;color:#e0e0e0">54</div>
<div class="a" style="left:1446px;top:875px;width:428px;height:2px;background:#444444;"></div>
<div class="a" style="left:1446px;top:875px;width:131px;height:2px;background:#cfcfcf;"></div>
<div class="a" style="left:1569px;top:868px;width:16px;height:16px;border-radius:50%;border:2px solid #d0d0d0;background:#323232;box-shadow:0 0 0 3px #323232"></div>
<div class="t" style="left:1446px;top:898px;font-size:11px;color:#a8a8a8;font-weight:normal;">Конусообразный</div>
<div class="t" style="left:1774px;width:100px;text-align:right;top:897px;font-size:12.5px;color:#e0e0e0">0</div>
<div class="a" style="left:1446px;top:925px;width:428px;height:2px;background:#444444;"></div>
<div class="a" style="left:1445px;top:918px;width:16px;height:16px;border-radius:50%;border:2px solid #d0d0d0;background:#323232;box-shadow:0 0 0 3px #323232"></div>
<div class="t" style="left:1446px;top:948px;font-size:11px;color:#a8a8a8;font-weight:normal;">Скорость</div>
<div class="t" style="left:1774px;width:100px;text-align:right;top:947px;font-size:12.5px;color:#e0e0e0">-1</div>
<div class="a" style="left:1446px;top:975px;width:428px;height:2px;background:#444444;"></div>
<div class="a" style="left:1650px;top:968px;width:16px;height:16px;border-radius:50%;border:2px solid #d0d0d0;background:#323232;box-shadow:0 0 0 3px #323232"></div>
<div class="t" style="left:1446px;top:998px;font-size:11px;color:#a8a8a8;font-weight:normal;">Нажим</div>
<div class="t" style="left:1774px;width:100px;text-align:right;top:997px;font-size:12.5px;color:#e0e0e0">78</div>
<div class="a" style="left:1446px;top:1025px;width:428px;height:2px;background:#444444;"></div>
<div class="a" style="left:1660px;top:1025px;width:161px;height:2px;background:#cfcfcf;"></div>
<div class="a" style="left:1813px;top:1018px;width:16px;height:16px;border-radius:50%;border:2px solid #d0d0d0;background:#323232;box-shadow:0 0 0 3px #323232"></div>
<div class="a" style="left:0px;top:1040px;width:1920px;height:40px;background:linear-gradient(to right,#1e1e1e 0px,#1e1e1e 340px,#272422 450px,#302b28 600px,#3a3532 700px,#46403c 850px,#48423e 1000px,#3e3a37 1210px,#2e2a27 1250px,#221f1e 1340px,#202020 1400px,#232323 1920px);"></div>
<svg style="left:16px;top:1052px;" width="17" height="17" viewBox="0 0 17 17"><path d="M0 2.3L7 1.3V8H0Z M8 1.1L17 0V8H8Z M0 9H7V15.7L0 14.7Z M8 9H17V17L8 15.9Z" fill="#f0f0f0"/></svg>
<div class="a" style="left:48px;top:1040px;width:288px;height:40px;background:#2e2e2e;border:1px solid #4a4a4a;border-bottom:none"></div>
<svg style="left:60px;top:1052px;" width="17" height="17" viewBox="0 0 17 17"><circle cx="11" cy="6" r="5" fill="none" stroke="#e8e8e8" stroke-width="1.3"/><path d="M7.5 9.5L1 16" stroke="#e8e8e8" stroke-width="1.5"/></svg>
<div class="t" style="left:88px;top:1052px;font-size:15.5px;color:#e8e8e8;font-weight:normal;">Поиск</div>
<svg style="left:250px;top:1040px;overflow:hidden" width="86" height="40" viewBox="0 0 86 40"><defs><linearGradient id="rk" x1="0" y1="0" x2="1" y2="1"><stop offset="0" stop-color="#f0a070"/><stop offset="1" stop-color="#cf5a2a"/></linearGradient></defs><path d="M9 36L16 24L23 36Z M70 36L77 24L84 38Z" fill="#93aaf2"/><path d="M22 37C24 26 28 14 32 9L37 5C43 3 49 4 53 8L57 11C62 16 66 26 70 36Z" fill="url(#rk)"/><path d="M36 7V34M52 8V33" stroke="#f5b890" stroke-width="1.2" opacity="0.7"/><circle cx="13" cy="24" r="4.5" fill="#f2c224"/><circle cx="18" cy="18" r="5" fill="#f5cc2a"/><circle cx="23" cy="20" r="4" fill="#e8b420"/><path d="M17 24V37" stroke="#8a5a30" stroke-width="1.3"/><circle cx="74" cy="25" r="4.5" fill="#f2c224"/><circle cx="79" cy="29" r="3.5" fill="#e8b420"/><path d="M78 31V38" stroke="#8a5a30" stroke-width="1.2"/><ellipse cx="24" cy="41" rx="20" ry="6" fill="#e9a444"/><ellipse cx="47" cy="40" rx="16" ry="8" fill="#f0b450"/><ellipse cx="70" cy="42" rx="18" ry="7" fill="#e39a3c"/></svg>
<svg style="left:352px;top:1052px;" width="17" height="17" viewBox="0 0 17 17"><circle cx="8.5" cy="8.5" r="7" fill="none" stroke="#f0f0f0" stroke-width="2"/></svg>
<svg style="left:398px;top:1050px;" width="20" height="19" viewBox="0 0 20 19"><rect x="3" y="4" width="12" height="10" fill="none" stroke="#e8e8e8" stroke-width="1.5"/><path d="M0 2H18M0 16H18M17 6V12" stroke="#e8e8e8" stroke-width="1.4"/></svg>
<svg style="left:447px;top:1050px;" width="23" height="19" viewBox="0 0 23 19"><path d="M0 2H8L10 4H22V19H0Z" fill="#f2b824"/><rect x="0" y="6" width="22" height="13" fill="#ffd04a"/><rect x="7" y="12" width="8" height="5" fill="#2b80d0"/></svg>
<div class="a" style="left:436px;top:1077px;width:44px;height:3px;background:#7aa6d6;"></div>
<svg style="left:495px;top:1048px;" width="25" height="25" viewBox="0 0 25 25"><ellipse cx="12.5" cy="12.5" rx="11.5" ry="11.5" fill="none" stroke="#e0143c" stroke-width="3"/><ellipse cx="12.5" cy="12.5" rx="5" ry="9" fill="none" stroke="#e0143c" stroke-width="2.5"/></svg>
<div class="a" style="left:485px;top:1077px;width:44px;height:3px;background:#7aa6d6;"></div>
<svg style="left:544px;top:1047px;" width="26" height="26" viewBox="0 0 26 26"><circle cx="13" cy="11" r="8" fill="none" stroke="#20c0b0" stroke-width="2.5" stroke-dasharray="3 2"/><path d="M13 6V15M9.5 11.5L13 15L16.5 11.5" stroke="#20c0b0" stroke-width="2" fill="none"/><path d="M3 20V24H23V20" stroke="#20c0b0" stroke-width="2" fill="none"/></svg>
<div class="a" style="left:534px;top:1077px;width:44px;height:3px;background:#7aa6d6;"></div>
<svg style="left:593px;top:1048px;" width="25" height="25" viewBox="0 0 25 25"><circle cx="12.5" cy="12.5" r="12" fill="#3d6ee8"/><path d="M7.5 7L12.5 18L17.5 7" stroke="#fff" stroke-width="2.5" fill="none"/></svg>
<div class="a" style="left:583px;top:1077px;width:44px;height:3px;background:#7aa6d6;"></div>
<svg style="left:641px;top:1047px;" width="28" height="26" viewBox="0 0 28 26"><rect x="1" y="1" width="26" height="24" rx="3" fill="#4aa8f0"/><path d="M1 22L9 12L15 18L20 13L27 20V25H1Z" fill="#e8f4ff"/><circle cx="20" cy="7" r="3" fill="#fff"/></svg>
<div class="a" style="left:632px;top:1077px;width:44px;height:3px;background:#7aa6d6;"></div>
<div class="a" style="left:680px;top:1040px;width:48px;height:40px;background:rgba(255,255,255,0.12);"></div>
<svg style="left:692px;top:1048px;" width="24" height="24" viewBox="0 0 24 24"><rect x="0" y="0" width="24" height="24" fill="#2a0000"/><rect x="1" y="1" width="22" height="22" fill="none" stroke="#ff1a1a" stroke-width="1.5"/></svg>
<div class="t" style="left:696px;top:1052px;font-size:13px;color:#ff3a3a;font-weight:bold;">An</div>
<div class="a" style="left:681px;top:1077px;width:46px;height:3px;background:#7aa6d6;"></div>
<div class="t" style="left:1604px;top:1053px;font-size:12.5px;color:#f0f0f0;font-weight:normal;">RU</div>
<svg style="left:1648px;top:1050px;" width="18" height="17" viewBox="0 0 18 17"><circle cx="5.5" cy="9" r="3" fill="none" stroke="#eee" stroke-width="1.3"/><circle cx="12" cy="4" r="3" fill="none" stroke="#eee" stroke-width="1.3"/><path d="M0.5 16.5C1 13 3 12 5.5 12C8 12 10 13 10.5 16.5M8 9C9 7.5 10 7 12 7C14.5 7 16.5 8 17 12" stroke="#eee" stroke-width="1.3" fill="none"/></svg>
<svg style="left:1686px;top:1054px;" width="13" height="8" viewBox="0 0 13 8"><path d="M0.7 7.3L6.5 1.5L12.3 7.3" stroke="#eee" stroke-width="1.4" fill="none"/></svg>
<svg style="left:1710px;top:1049px;" width="12" height="20" viewBox="0 0 12 20"><rect x="3" y="0" width="6" height="12" rx="3" fill="#eee"/><path d="M1 8C1 12 3 14 6 14C9 14 11 12 11 8M6 14V18M3 18.5H9" stroke="#eee" stroke-width="1.3" fill="none"/></svg>
<svg style="left:1733px;top:1054px;" width="18" height="11" viewBox="0 0 18 11"><path d="M3.5 11C1.5 11 0 9.7 0 7.8C0 6 1.3 4.6 3.2 4.6C3.6 1.9 5.8 0 8.5 0C11.2 0 13.4 1.9 13.8 4.6C16.4 4.6 18 6 18 8C18 9.8 16.8 11 15 11Z" fill="#d8d8d8"/></svg>
<svg style="left:1756px;top:1052px;" width="17" height="15" viewBox="0 0 17 15"><path d="M0 5H3.5L8 1V14L3.5 10H0Z" fill="none" stroke="#eee" stroke-width="1.2"/><path d="M10.5 4.5C11.7 6 11.7 9 10.5 10.5M13 2.5C15 5 15 10 13 12.5M15.5 1C18 4 18 11 15.5 14" stroke="#aaa" stroke-width="1.1" fill="none"/></svg>
<svg style="left:1781px;top:1051px;" width="18" height="17" viewBox="0 0 18 17"><rect x="0.6" y="3" width="5" height="5" fill="none" stroke="#eee" stroke-width="1.1"/><rect x="3" y="3" width="14" height="10" fill="none" stroke="#eee" stroke-width="1.2"/><path d="M10 13V16M6 16.5H14" stroke="#eee" stroke-width="1.2"/></svg>
<div class="t" style="left:1819px;top:1045px;font-size:12px;color:#f0f0f0;font-weight:normal;letter-spacing:-0.4px">18:27</div>
<div class="t" style="left:1807px;top:1063px;font-size:12px;color:#f0f0f0;font-weight:normal;letter-spacing:-0.6px">09.07.2024</div>
<svg style="left:1878px;top:1051px;" width="21" height="18" viewBox="0 0 21 18"><path d="M0.7 0.7H20.3V13.3H10L6 17V13.3H0.7Z" fill="none" stroke="#eee" stroke-width="1.3"/></svg>
<div class="a" style="left:1917px;top:1040px;width:1px;height:40px;background:#555;"></div>
</body></html>
